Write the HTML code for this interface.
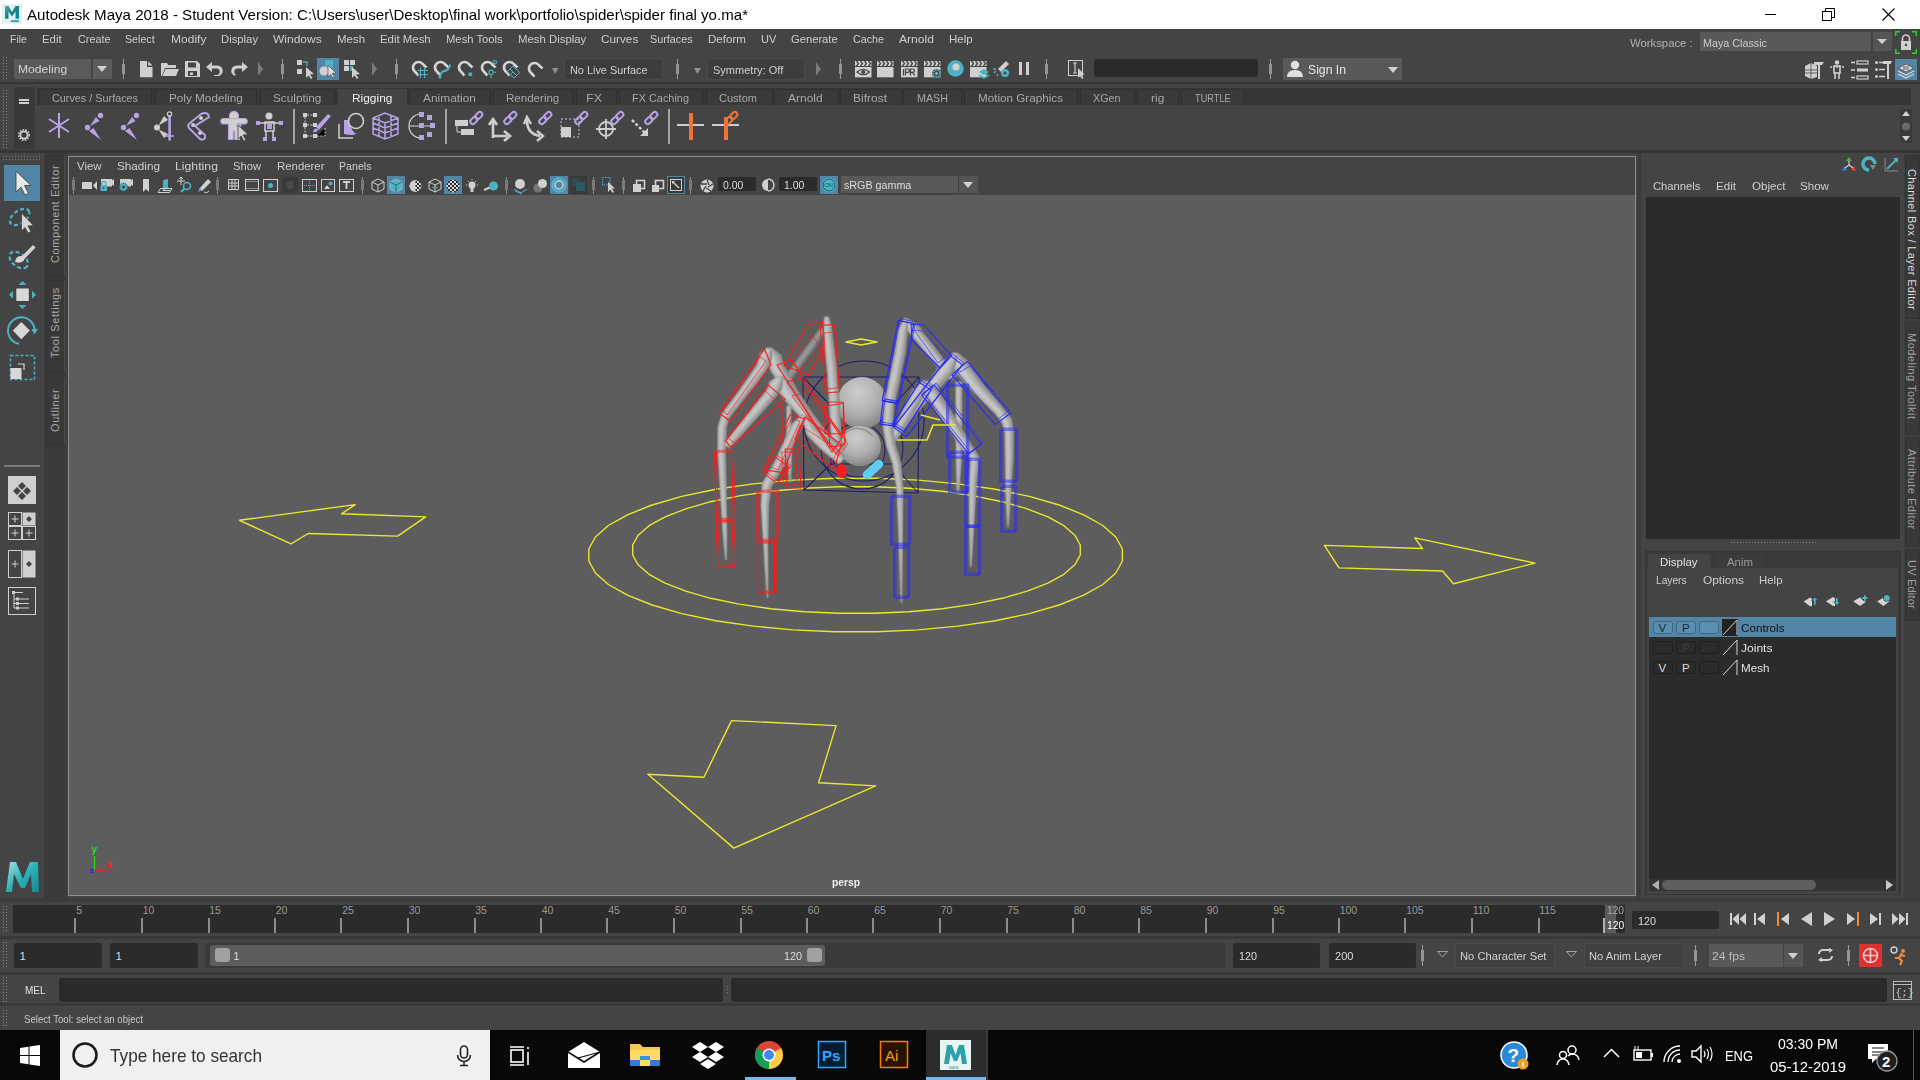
<!DOCTYPE html>
<html><head><meta charset="utf-8"><style>
html,body{margin:0;padding:0;}
body{width:1920px;height:1080px;overflow:hidden;position:relative;background:#444;font-family:"Liberation Sans", sans-serif;}
.a{position:absolute;box-sizing:border-box;}
.t{white-space:nowrap;line-height:normal;transform-origin:0 0;}
svg{position:absolute;overflow:visible;}
</style></head><body>
<div class="a" style="left:0px;top:0px;width:1920px;height:29px;background:#ffffff;"></div>
<svg style="left:2px;top:4px" width="20" height="20"><defs><linearGradient id="tg" x1="0" y1="0" x2="1" y2="1"><stop offset="0" stop-color="#5aa8a8"/><stop offset="0.5" stop-color="#137f86"/><stop offset="1" stop-color="#0e8a8a"/></linearGradient></defs><rect x="0" y="0" width="20" height="19.7" fill="#e2f1f1"/><path d="M3 14.7 V2 H6.5 L10 8 L13.5 2 H17 V14.7 H13.5 V7.5 L10 12.5 L6.5 7.5 V14.7 Z" fill="url(#tg)"/><rect x="9" y="16" width="8" height="2.2" fill="#3fb0a8"/></svg>
<div class="a t" id="t0" style="transform:scaleX(1.0194);left:27px;top:6.61px;font-size:14.8px;color:#000;">Autodesk Maya 2018 - Student Version: C:\Users\user\Desktop\final work\portfolio\spider\spider final yo.ma*</div>
<div class="a" style="left:1765px;top:14px;width:11px;height:1px;background:#000;"></div>
<svg style="left:1822px;top:8px" width="14" height="14"><rect x="0.5" y="3.5" width="9" height="9" fill="none" stroke="#000" stroke-width="1"/><path d="M3.5 3.5 V0.5 H12.5 V9.5 H9.5" fill="none" stroke="#000" stroke-width="1"/></svg>
<svg style="left:1882px;top:8px" width="13" height="13"><path d="M0.5 0.5 L12.5 12.5 M12.5 0.5 L0.5 12.5" stroke="#000" stroke-width="1.1"/></svg>
<div class="a t" id="t1" style="transform:scaleX(0.9501);left:9.75px;top:33.05px;font-size:11px;color:#cdcdcd;">File</div>
<div class="a t" id="t2" style="transform:scaleX(1.0359);left:42.25px;top:33.05px;font-size:11px;color:#cdcdcd;">Edit</div>
<div class="a t" id="t3" style="transform:scaleX(0.9839);left:77.5px;top:33.05px;font-size:11px;color:#cdcdcd;">Create</div>
<div class="a t" id="t4" style="transform:scaleX(0.9680);left:125.4px;top:33.05px;font-size:11px;color:#cdcdcd;">Select</div>
<div class="a t" id="t5" style="transform:scaleX(1.0924);left:170.6px;top:33.05px;font-size:11px;color:#cdcdcd;">Modify</div>
<div class="a t" id="t6" style="transform:scaleX(1.0269);left:221.25px;top:33.05px;font-size:11px;color:#cdcdcd;">Display</div>
<div class="a t" id="t7" style="transform:scaleX(1.0913);left:273px;top:33.05px;font-size:11px;color:#cdcdcd;">Windows</div>
<div class="a t" id="t8" style="transform:scaleX(1.0407);left:337px;top:33.05px;font-size:11px;color:#cdcdcd;">Mesh</div>
<div class="a t" id="t9" style="transform:scaleX(1.0363);left:380px;top:33.05px;font-size:11px;color:#cdcdcd;">Edit Mesh</div>
<div class="a t" id="t10" style="transform:scaleX(1.0228);left:446px;top:33.05px;font-size:11px;color:#cdcdcd;">Mesh Tools</div>
<div class="a t" id="t11" style="transform:scaleX(1.0344);left:517.7px;top:33.05px;font-size:11px;color:#cdcdcd;">Mesh Display</div>
<div class="a t" id="t12" style="transform:scaleX(1.0705);left:601px;top:33.05px;font-size:11px;color:#cdcdcd;">Curves</div>
<div class="a t" id="t13" style="transform:scaleX(0.9834);left:650px;top:33.05px;font-size:11px;color:#cdcdcd;">Surfaces</div>
<div class="a t" id="t14" style="transform:scaleX(1.0537);left:708px;top:33.05px;font-size:11px;color:#cdcdcd;">Deform</div>
<div class="a t" id="t15" style="transform:scaleX(1.0012);left:760.7px;top:33.05px;font-size:11px;color:#cdcdcd;">UV</div>
<div class="a t" id="t16" style="transform:scaleX(1.0180);left:791px;top:33.05px;font-size:11px;color:#cdcdcd;">Generate</div>
<div class="a t" id="t17" style="transform:scaleX(0.9749);left:853px;top:33.05px;font-size:11px;color:#cdcdcd;">Cache</div>
<div class="a t" id="t18" style="transform:scaleX(1.1007);left:899px;top:33.05px;font-size:11px;color:#cdcdcd;">Arnold</div>
<div class="a t" id="t19" style="transform:scaleX(1.0475);left:949px;top:33.05px;font-size:11px;color:#cdcdcd;">Help</div>
<div class="a t" id="t20" style="transform:scaleX(1.0289);left:1630px;top:37.05px;font-size:11px;color:#b4b4b4;">Workspace :</div>
<div class="a" style="left:1700px;top:32px;width:171px;height:19px;background:#595959;"></div>
<div class="a" style="left:1873px;top:32px;width:19px;height:19px;background:#555555;"></div>
<div class="a t" id="t21" style="transform:scaleX(0.9785);left:1703.3px;top:37.25px;font-size:11px;color:#cdcdcd;">Maya Classic</div>
<svg style="left:1876px;top:38px" width="12" height="8"><path d="M1 1 H11 L6 6 Z" fill="#cfcfcf"/></svg>
<svg style="left:1895px;top:31px" width="22" height="23"><path d="M0.75 5 V0.75 H5 M17 0.75 H21.25 V5 M21.25 18 V22.25 H17 M5 22.25 H0.75 V18" fill="none" stroke="#22d822" stroke-width="1.5"/><path d="M7.5 10 V7.5 A3.5 3.5 0 0 1 14.5 7.5 V10" fill="none" stroke="#cfcfcf" stroke-width="1.6"/><rect x="6" y="10" width="10" height="9" fill="#cfcfcf"/><circle cx="11" cy="14" r="1.2" fill="#444"/></svg>
<div class="a" style="left:0px;top:82px;width:1920px;height:2px;background:#363636;"></div>
<div class="a" style="left:2px;top:56px;width:6px;height:24px;background-image:radial-gradient(circle at 1.5px 1.5px,#8a8a8a 0.75px,transparent 0.95px);background-size:3px 3px;"></div>
<div class="a" style="left:14px;top:59px;width:77px;height:20px;background:#5a5a5a;"></div>
<div class="a" style="left:93px;top:59px;width:19px;height:20px;background:#5c5c5c;"></div>
<div class="a t" id="t22" style="transform:scaleX(1.0542);left:17.5px;top:63.39px;font-size:11.5px;color:#d2d2d2;">Modeling</div>
<svg style="left:97px;top:66px" width="10" height="6"><path d="M0 0 H10 L5.0 6 Z" fill="#d0d0d0"/></svg>
<div class="a" style="left:123px;top:59px;width:1px;height:20px;background:#9a9a9a;"></div>
<div class="a" style="left:122px;top:64.0px;width:3px;height:10px;background:#949494;"></div>
<svg style="left:139.5px;top:61px" width="13" height="17"><path d="M0 0 H7 V6 H12.5 V16.3 H0 Z" fill="#cfcfcf"/><path d="M8.2 0.3 L12.5 4.6 H8.2 Z" fill="#cfcfcf"/></svg>
<svg style="left:161px;top:61px" width="18" height="15"><path d="M0 2 H6 L7.5 4 H15 V7 H4 L1 15 H0 Z" fill="#cfcfcf"/><path d="M4.5 8 H18 L15 15 H1.5 Z" fill="#cfcfcf"/></svg>
<svg style="left:185px;top:61px" width="15" height="16"><path d="M0 0 H12 L15 3 V16 H0 Z" fill="#cfcfcf"/><rect x="3" y="1.5" width="8" height="5" fill="#444"/><rect x="3" y="10" width="9" height="5" fill="#444"/><rect x="5" y="11.5" width="3" height="2.5" fill="#cfcfcf"/></svg>
<svg style="left:206px;top:62px" width="18" height="14"><path d="M6 0 L0 5 L6 10 V6.5 H11 A3.3 3.3 0 0 1 11 13 H8 V14 H11.5 A5 5 0 0 0 11.5 3.5 H6 Z" fill="#cfcfcf"/></svg>
<svg style="left:230px;top:62px" width="18" height="14"><path d="M12 0 L18 5 L12 10 V6.5 H7 A3.3 3.3 0 0 0 7 13 H5 V14 H6.5 A5 5 0 0 1 6.5 3.5 H12 Z" fill="#cfcfcf"/></svg>
<svg style="left:258px;top:62px" width="6" height="14"><path d="M0 0 L5 7 L0 14 Z" fill="#7a7a7a"/></svg>
<div class="a" style="left:282px;top:59px;width:1px;height:20px;background:#9a9a9a;"></div>
<div class="a" style="left:281px;top:64.0px;width:3px;height:10px;background:#949494;"></div>
<svg style="left:297px;top:60px" width="18" height="18"><rect x="0" y="0" width="5" height="5" fill="#cfcfcf"/><rect x="0" y="9" width="5" height="5" fill="#cfcfcf"/><path d="M6 2 H10 V6" stroke="#4cb3c4" fill="none" stroke-width="1.3"/><path d="M9 7 L9 18 L11.5 15.5 L14 19 L15.5 18 L13 14.5 L17 14 Z" fill="#cfcfcf"/></svg>
<div class="a" style="left:317px;top:58px;width:22px;height:22px;background:#5285a6;"></div>
<svg style="left:319px;top:60px" width="18" height="18"><rect x="6" y="0" width="8" height="8" fill="#4cb3c4" stroke="#2d5d79" stroke-width="0"/><circle cx="5" cy="11" r="4.5" fill="#cfcfcf"/><path d="M9 5 L9 17 L11.5 14.5 L14 18 L15.5 17 L13 13.5 L17 13 Z" fill="#dcdcdc" stroke="#444" stroke-width="0.6"/></svg>
<svg style="left:344px;top:60px" width="16" height="18"><rect x="0" y="0" width="5" height="5" fill="#cfcfcf"/><rect x="6" y="0" width="5" height="5" fill="#cfcfcf"/><rect x="0" y="6" width="5" height="5" fill="#cfcfcf"/><rect x="6" y="6" width="3" height="5" fill="#4cb3c4"/><path d="M8 7 L8 18 L10.5 15.5 L13 19 L14.5 18 L12 14.5 L16 14 Z" fill="#cfcfcf"/></svg>
<svg style="left:372px;top:62px" width="6" height="14"><path d="M0 0 L5 7 L0 14 Z" fill="#7a7a7a"/></svg>
<div class="a" style="left:396px;top:59px;width:1px;height:20px;background:#9a9a9a;"></div>
<div class="a" style="left:395px;top:64.0px;width:3px;height:10px;background:#949494;"></div>
<svg style="left:411px;top:60px" width="20" height="20"><g transform="rotate(0 8 8)"><path d="M6 13.8 L3.6 11.4 A5.4 5.4 0 0 1 11.4 3.6 L13.8 6" fill="none" stroke="#d4d4d4" stroke-width="2.7"/><path d="M5.0 14.6 H8.2 M6.6 13.0 V16.2" stroke="#d8d8d8" stroke-width="1.1"/><path d="M13.0 6.6 H16.2 M14.6 5.0 V8.2" stroke="#d8d8d8" stroke-width="1.1"/></g><path d="M9.5 7.5 V18 M13.5 7.5 V18 M6.5 10.5 H17 M6.5 14.5 H17" stroke="#4cb3c4" stroke-width="1.2"/></svg>
<svg style="left:433px;top:60px" width="20" height="20"><g transform="rotate(0 8 8)"><path d="M6 13.8 L3.6 11.4 A5.4 5.4 0 0 1 11.4 3.6 L13.8 6" fill="none" stroke="#d4d4d4" stroke-width="2.7"/><path d="M5.0 14.6 H8.2 M6.6 13.0 V16.2" stroke="#d8d8d8" stroke-width="1.1"/><path d="M13.0 6.6 H16.2 M14.6 5.0 V8.2" stroke="#d8d8d8" stroke-width="1.1"/></g><path d="M7 16.5 Q7.5 12 11.5 11 Q16 10 17 4.5" stroke="#4cb3c4" fill="none" stroke-width="2"/><circle cx="7" cy="17" r="1.6" fill="#4cb3c4"/></svg>
<svg style="left:457px;top:60px" width="20" height="20"><g transform="rotate(0 8 8)"><path d="M6 13.8 L3.6 11.4 A5.4 5.4 0 0 1 11.4 3.6 L13.8 6" fill="none" stroke="#d4d4d4" stroke-width="2.7"/><path d="M5.0 14.6 H8.2 M6.6 13.0 V16.2" stroke="#d8d8d8" stroke-width="1.1"/><path d="M13.0 6.6 H16.2 M14.6 5.0 V8.2" stroke="#d8d8d8" stroke-width="1.1"/></g><circle cx="13.3" cy="14.2" r="2" fill="#4cb3c4"/></svg>
<svg style="left:480px;top:60px" width="20" height="20"><g transform="rotate(0 8 8)"><path d="M6 13.8 L3.6 11.4 A5.4 5.4 0 0 1 11.4 3.6 L13.8 6" fill="none" stroke="#d4d4d4" stroke-width="2.7"/><path d="M5.0 14.6 H8.2 M6.6 13.0 V16.2" stroke="#d8d8d8" stroke-width="1.1"/><path d="M13.0 6.6 H16.2 M14.6 5.0 V8.2" stroke="#d8d8d8" stroke-width="1.1"/></g><circle cx="14.8" cy="2.2" r="1.7" fill="none" stroke="#4cb3c4" stroke-width="1.1"/><circle cx="11" cy="12.3" r="2.2" fill="none" stroke="#4cb3c4" stroke-width="1.1"/><path d="M11 15 V18 M14 12.3 H16" stroke="#4cb3c4" stroke-width="1.1"/></svg>
<svg style="left:502px;top:60px" width="20" height="20"><g transform="rotate(0 8 8)"><path d="M6 13.8 L3.6 11.4 A5.4 5.4 0 0 1 11.4 3.6 L13.8 6" fill="none" stroke="#d4d4d4" stroke-width="2.7"/><path d="M5.0 14.6 H8.2 M6.6 13.0 V16.2" stroke="#d8d8d8" stroke-width="1.1"/><path d="M13.0 6.6 H16.2 M14.6 5.0 V8.2" stroke="#d8d8d8" stroke-width="1.1"/></g><path d="M5 12 L11 6 L17.8 12.5 L12 18 Z M8 9 L14.5 15.5 M11 12 L8.5 14.5" fill="none" stroke="#4cb3c4" stroke-width="1"/></svg>
<svg style="left:527px;top:61px" width="20" height="20"><g transform="rotate(0 8 8)"><path d="M6 13.8 L3.6 11.4 A5.4 5.4 0 0 1 11.4 3.6 L13.8 6" fill="none" stroke="#d4d4d4" stroke-width="2.7"/><path d="M5.0 14.6 H8.2 M6.6 13.0 V16.2" stroke="#d8d8d8" stroke-width="1.1"/><path d="M13.0 6.6 H16.2 M14.6 5.0 V8.2" stroke="#d8d8d8" stroke-width="1.1"/></g></svg>
<svg style="left:551.5px;top:67.5px" width="6.5" height="6"><path d="M0 0 H6.5 L3.25 6 Z" fill="#8f8f8f"/></svg>
<div class="a" style="left:564px;top:58px;width:99px;height:22px;background:#3d3d3d;border:1px solid #4a4a4a;border-radius:2px;"></div>
<div class="a t" id="t23" style="transform:scaleX(0.9735);left:570.3px;top:64.06px;font-size:11.2px;color:#d0d0d0;">No Live Surface</div>
<div class="a" style="left:677px;top:59px;width:1px;height:20px;background:#9a9a9a;"></div>
<div class="a" style="left:676px;top:64.0px;width:3px;height:10px;background:#949494;"></div>
<svg style="left:694px;top:68px" width="7" height="6"><path d="M0 0 H7 L3.5 6 Z" fill="#8f8f8f"/></svg>
<div class="a" style="left:707px;top:58px;width:98px;height:22px;background:#3d3d3d;border:1px solid #4a4a4a;border-radius:2px;"></div>
<div class="a t" id="t24" style="transform:scaleX(0.9848);left:712.5px;top:63.86px;font-size:11.2px;color:#d0d0d0;">Symmetry: Off</div>
<svg style="left:816px;top:62px" width="6" height="14"><path d="M0 0 L5 7 L0 14 Z" fill="#7a7a7a"/></svg>
<div class="a" style="left:840px;top:59px;width:1px;height:20px;background:#9a9a9a;"></div>
<div class="a" style="left:839px;top:64.0px;width:3px;height:10px;background:#949494;"></div>
<svg style="left:855px;top:60px" width="18" height="18"><rect x="0" y="1" width="16.5" height="5" fill="#cfcfcf"/><path d="M1.5 1 L3.5 3.5 L1.5 6 M5.5 1 L7.5 3.5 L5.5 6 M9.5 1 L11.5 3.5 L9.5 6 M13.5 1 L15.5 3.5 L13.5 6" stroke="#444" stroke-width="1.3" fill="none"/><rect x="0" y="7" width="16.5" height="10.3" fill="#cfcfcf"/><path d="M2 12 Q8.2 6.5 14.5 12 Q8.2 17.5 2 12 Z" fill="none" stroke="#444" stroke-width="1.2"/><circle cx="8.2" cy="12" r="2" fill="#444"/></svg>
<svg style="left:877px;top:60px" width="18" height="18"><rect x="0" y="1" width="16.5" height="5" fill="#cfcfcf"/><path d="M1.5 1 L3.5 3.5 L1.5 6 M5.5 1 L7.5 3.5 L5.5 6 M9.5 1 L11.5 3.5 L9.5 6 M13.5 1 L15.5 3.5 L13.5 6" stroke="#444" stroke-width="1.3" fill="none"/><rect x="0" y="7" width="16.5" height="10.3" fill="#cfcfcf"/></svg>
<svg style="left:901px;top:60px" width="18" height="18"><rect x="0" y="1" width="16.5" height="5" fill="#cfcfcf"/><path d="M1.5 1 L3.5 3.5 L1.5 6 M5.5 1 L7.5 3.5 L5.5 6 M9.5 1 L11.5 3.5 L9.5 6 M13.5 1 L15.5 3.5 L13.5 6" stroke="#444" stroke-width="1.3" fill="none"/><rect x="0" y="7" width="16.5" height="10.3" fill="#cfcfcf"/><path d="M2.5 9 V15.5 M4.5 15.5 V9 H6.8 A1.7 1.7 0 0 1 6.8 12.4 H4.5 M9.5 15.5 V9 H11.8 A1.7 1.7 0 0 1 11.8 12.4 H9.5 M11.5 12.4 L13.8 15.5" stroke="#444" stroke-width="1.2" fill="none"/></svg>
<svg style="left:924px;top:60px" width="18" height="18"><rect x="0" y="1" width="16.5" height="5" fill="#cfcfcf"/><path d="M1.5 1 L3.5 3.5 L1.5 6 M5.5 1 L7.5 3.5 L5.5 6 M9.5 1 L11.5 3.5 L9.5 6 M13.5 1 L15.5 3.5 L13.5 6" stroke="#444" stroke-width="1.3" fill="none"/><rect x="0" y="7" width="16.5" height="10.3" fill="#cfcfcf"/><circle cx="12.5" cy="13.5" r="4.5" fill="#444"/><circle cx="12.5" cy="13.5" r="3.6" fill="none" stroke="#4cb3c4" stroke-width="2" stroke-dasharray="1.6 0.9"/><circle cx="12.5" cy="13.5" r="1.2" fill="#cfcfcf"/></svg>
<svg style="left:947px;top:60px" width="17" height="17"><circle cx="8.5" cy="8.5" r="8.3" fill="#4cb3c4"/><circle cx="9" cy="7" r="3.6" fill="#d0d0d0"/></svg>
<svg style="left:970px;top:60px" width="18" height="18"><rect x="0" y="1" width="16.5" height="5" fill="#cfcfcf"/><path d="M1.5 1 L3.5 3.5 L1.5 6 M5.5 1 L7.5 3.5 L5.5 6 M9.5 1 L11.5 3.5 L9.5 6 M13.5 1 L15.5 3.5 L13.5 6" stroke="#444" stroke-width="1.3" fill="none"/><rect x="0" y="7" width="16.5" height="10.3" fill="#cfcfcf"/><path d="M9 12 L14 9 L19 12 L14 15 Z" fill="#4cb3c4"/><path d="M9 15 L14 18 L19 15" stroke="#4cb3c4" fill="none" stroke-width="1.5"/></svg>
<svg style="left:993px;top:60px" width="18" height="18"><path d="M5 9 L13 1 L16 4 L8 12 Z" fill="#cfcfcf"/><circle cx="12" cy="13" r="4" fill="#4cb3c4"/><circle cx="12" cy="13" r="1.5" fill="#444"/><path d="M0 9 H3 M1 13 L3 11 M4 16 L5 14" stroke="#4cb3c4" stroke-width="1.3"/></svg>
<div class="a" style="left:1019px;top:62px;width:3px;height:13px;background:#cfcfcf;"></div>
<div class="a" style="left:1026px;top:62px;width:3px;height:13px;background:#cfcfcf;"></div>
<div class="a" style="left:1046px;top:59px;width:1px;height:20px;background:#9a9a9a;"></div>
<div class="a" style="left:1045px;top:64.0px;width:3px;height:10px;background:#949494;"></div>
<svg style="left:1068px;top:60px" width="18" height="19"><rect x="0.5" y="0.5" width="14" height="15" fill="none" stroke="#cfcfcf"/><path d="M5 3 H9 M7 3 V13 M5 13 H9" stroke="#cfcfcf" stroke-width="1.2"/><path d="M10 8 L10 18 L12 16 L14 19 L15.5 18 L13.5 15 L16.5 14.5 Z" fill="#cfcfcf"/></svg>
<div class="a" style="left:1094px;top:59px;width:164px;height:18px;background:#2b2b2b;border-radius:3px;"></div>
<div class="a" style="left:1270px;top:59px;width:1px;height:20px;background:#9a9a9a;"></div>
<div class="a" style="left:1269px;top:64.0px;width:3px;height:10px;background:#949494;"></div>
<div class="a" style="left:1283px;top:58px;width:119px;height:22px;background:#595959;"></div>
<svg style="left:1287px;top:60px" width="16" height="18"><circle cx="8" cy="5" r="4.2" fill="#e0e0e0"/><path d="M0 17 Q0 10 8 10 Q16 10 16 17 Z" fill="#e0e0e0"/></svg>
<div class="a t" id="t25" style="transform:scaleX(0.9763);left:1307.7px;top:63.39px;font-size:12.5px;color:#e6e6e6;">Sign In</div>
<svg style="left:1388px;top:67px" width="10" height="6"><path d="M0 0 H10 L5.0 6 Z" fill="#d0d0d0"/></svg>
<svg style="left:1805px;top:60px" width="19" height="19"><path d="M0 6 L6 3 L12 6 V17 L6 19 L0 16 Z" fill="#cfcfcf"/><path d="M6 3 L6 19 M0 10 L12 10 M0 13 L12 13" stroke="#444" stroke-width="0.8"/><path d="M9 2 H19 L17 5 H15 V19 H13 V5 H9 Z" fill="#cfcfcf"/></svg>
<svg style="left:1829px;top:60px" width="16" height="19"><circle cx="8" cy="2.5" r="2.2" fill="#cfcfcf"/><path d="M1 7 H15" stroke="#cfcfcf" stroke-width="1.5" stroke-dasharray="2 1"/><rect x="5" y="6" width="6" height="7" fill="none" stroke="#cfcfcf" stroke-width="1.6"/><path d="M6 13 V19 M10 13 V19" stroke="#cfcfcf" stroke-width="1.6"/></svg>
<svg style="left:1851px;top:61px" width="18" height="18"><path d="M0 1.5 H4 M0 9 H4 M0 16.5 H4" stroke="#cfcfcf" stroke-width="1.5"/><rect x="6" y="0" width="11" height="3" fill="none" stroke="#cfcfcf" stroke-width="1.2"/><rect x="6" y="7.5" width="11" height="3" fill="#cfcfcf"/><rect x="6" y="15" width="11" height="3" fill="none" stroke="#cfcfcf" stroke-width="1.2"/></svg>
<svg style="left:1875px;top:61px" width="17" height="18"><circle cx="1.5" cy="1.5" r="1.5" fill="#cfcfcf"/><circle cx="1.5" cy="8.5" r="1.5" fill="#cfcfcf"/><circle cx="1.5" cy="15.5" r="1.5" fill="#cfcfcf"/><path d="M4 1.5 H8 M4 8.5 H10 M4 15.5 H10" stroke="#cfcfcf" stroke-width="1.3"/><path d="M8 0 H17 L15.5 3 H14 V18 H12 V3 H8 Z" fill="#cfcfcf"/></svg>
<div class="a" style="left:1895px;top:59px;width:22px;height:21px;background:#5285a6;"></div>
<svg style="left:1897px;top:61px" width="18" height="17"><path d="M9 11 L17 7 L9 3 L1 7 Z" fill="#d8d8d8" stroke="#444" stroke-width="0.8"/><path d="M1 10 L9 14 L17 10 M1 13 L9 17 L17 13" fill="none" stroke="#d8d8d8" stroke-width="1.3"/><path d="M6 6 H12 M6 8 H12" stroke="#444" stroke-width="0.8"/></svg>
<div class="a" style="left:2px;top:89px;width:6px;height:59px;background-image:radial-gradient(circle at 1.5px 1.5px,#8a8a8a 0.75px,transparent 0.95px);background-size:3px 3px;"></div>
<div class="a" style="left:14px;top:87px;width:21px;height:62px;background:#393939;"></div>
<div class="a" style="left:19px;top:99px;width:10px;height:2px;background:#cfcfcf;"></div>
<div class="a" style="left:19px;top:102px;width:10px;height:2px;background:#cfcfcf;"></div>
<svg style="left:18px;top:129px" width="12" height="12"><circle cx="6" cy="6" r="3.6" fill="none" stroke="#cfcfcf" stroke-width="1.8"/><circle cx="6" cy="6" r="5.2" fill="none" stroke="#cfcfcf" stroke-width="1.6" stroke-dasharray="1.6 1.2"/></svg>
<div class="a" style="left:37px;top:88px;width:1874px;height:17px;background:#363636;"></div>
<div class="a" style="left:39.3px;top:89px;width:112.39999999999999px;height:16px;background:#3a3a3a;border:1px solid #303030;border-bottom:none;border-radius:2px 2px 0 0;"></div>
<div class="a t" id="t26" style="transform:scaleX(0.9837);left:52.3px;top:92.34px;font-size:11px;color:#a8a8a8;">Curves / Surfaces</div>
<div class="a" style="left:155.3px;top:89px;width:101.39999999999998px;height:16px;background:#3a3a3a;border:1px solid #303030;border-bottom:none;border-radius:2px 2px 0 0;"></div>
<div class="a t" id="t27" style="transform:scaleX(1.0667);left:169px;top:92.34px;font-size:11px;color:#a8a8a8;">Poly Modeling</div>
<div class="a" style="left:260px;top:89px;width:75px;height:16px;background:#3a3a3a;border:1px solid #303030;border-bottom:none;border-radius:2px 2px 0 0;"></div>
<div class="a t" id="t28" style="transform:scaleX(1.0692);left:273.3px;top:92.34px;font-size:11px;color:#a8a8a8;">Sculpting</div>
<div class="a" style="left:338.3px;top:89px;width:68.39999999999998px;height:16px;background:#444444;"></div>
<div class="a t" id="t29" style="transform:scaleX(1.0827);left:352.3px;top:92.34px;font-size:11px;color:#f0f0f0;">Rigging</div>
<div class="a" style="left:409.3px;top:89px;width:80.69999999999999px;height:16px;background:#3a3a3a;border:1px solid #303030;border-bottom:none;border-radius:2px 2px 0 0;"></div>
<div class="a t" id="t30" style="transform:scaleX(1.0834);left:422.7px;top:92.34px;font-size:11px;color:#a8a8a8;">Animation</div>
<div class="a" style="left:492.7px;top:89px;width:80.59999999999997px;height:16px;background:#3a3a3a;border:1px solid #303030;border-bottom:none;border-radius:2px 2px 0 0;"></div>
<div class="a t" id="t31" style="transform:scaleX(1.0499);left:506px;top:92.34px;font-size:11px;color:#a8a8a8;">Rendering</div>
<div class="a" style="left:576px;top:89px;width:40.700000000000045px;height:16px;background:#3a3a3a;border:1px solid #303030;border-bottom:none;border-radius:2px 2px 0 0;"></div>
<div class="a t" id="t32" style="transform:scaleX(1.1378);left:585.7px;top:92.34px;font-size:11px;color:#a8a8a8;">FX</div>
<div class="a" style="left:619.3px;top:89px;width:83.70000000000005px;height:16px;background:#3a3a3a;border:1px solid #303030;border-bottom:none;border-radius:2px 2px 0 0;"></div>
<div class="a t" id="t33" style="transform:scaleX(0.9916);left:632px;top:92.34px;font-size:11px;color:#a8a8a8;">FX Caching</div>
<div class="a" style="left:705.7px;top:89px;width:67.59999999999991px;height:16px;background:#3a3a3a;border:1px solid #303030;border-bottom:none;border-radius:2px 2px 0 0;"></div>
<div class="a t" id="t34" style="transform:scaleX(1.0025);left:719.3px;top:92.34px;font-size:11px;color:#a8a8a8;">Custom</div>
<div class="a" style="left:774px;top:89px;width:65px;height:16px;background:#3a3a3a;border:1px solid #303030;border-bottom:none;border-radius:2px 2px 0 0;"></div>
<div class="a t" id="t35" style="transform:scaleX(1.0882);left:787.7px;top:92.34px;font-size:11px;color:#a8a8a8;">Arnold</div>
<div class="a" style="left:840px;top:89px;width:61.700000000000045px;height:16px;background:#3a3a3a;border:1px solid #303030;border-bottom:none;border-radius:2px 2px 0 0;"></div>
<div class="a t" id="t36" style="transform:scaleX(1.0902);left:852.7px;top:92.34px;font-size:11px;color:#a8a8a8;">Bifrost</div>
<div class="a" style="left:903.3px;top:89px;width:58.40000000000009px;height:16px;background:#3a3a3a;border:1px solid #303030;border-bottom:none;border-radius:2px 2px 0 0;"></div>
<div class="a t" id="t37" style="transform:scaleX(0.9754);left:916.7px;top:92.34px;font-size:11px;color:#a8a8a8;">MASH</div>
<div class="a" style="left:964px;top:89px;width:114.29999999999995px;height:16px;background:#3a3a3a;border:1px solid #303030;border-bottom:none;border-radius:2px 2px 0 0;"></div>
<div class="a t" id="t38" style="transform:scaleX(1.0613);left:978.3px;top:92.34px;font-size:11px;color:#a8a8a8;">Motion Graphics</div>
<div class="a" style="left:1080px;top:89px;width:55px;height:16px;background:#3a3a3a;border:1px solid #303030;border-bottom:none;border-radius:2px 2px 0 0;"></div>
<div class="a t" id="t39" style="transform:scaleX(0.9737);left:1093.3px;top:92.34px;font-size:11px;color:#a8a8a8;">XGen</div>
<div class="a" style="left:1137.3px;top:89px;width:41.700000000000045px;height:16px;background:#3a3a3a;border:1px solid #303030;border-bottom:none;border-radius:2px 2px 0 0;"></div>
<div class="a t" id="t40" style="transform:scaleX(1.0871);left:1151px;top:92.34px;font-size:11px;color:#a8a8a8;">rig</div>
<div class="a" style="left:1180.7px;top:89px;width:63.299999999999955px;height:16px;background:#3a3a3a;border:1px solid #303030;border-bottom:none;border-radius:2px 2px 0 0;"></div>
<div class="a t" id="t41" style="transform:scaleX(0.8382);left:1195px;top:92.34px;font-size:11px;color:#a8a8a8;">TURTLE</div>
<div class="a" style="left:1900px;top:109px;width:12px;height:34px;background:#3a3a3a;"></div>
<svg style="left:1901px;top:110px" width="10" height="32"><path d="M1 6 L5 1 L9 6 Z" fill="#d0d0d0"/><circle cx="5" cy="16.5" r="4" fill="#6a6a6a"/><path d="M1 26 L9 26 L5 31 Z" fill="#d0d0d0"/></svg>
<div class="a" style="left:293px;top:109px;width:2px;height:35px;background:#a5a5a5;"></div>
<div class="a" style="left:445px;top:109px;width:2px;height:35px;background:#a5a5a5;"></div>
<div class="a" style="left:668px;top:109px;width:2px;height:35px;background:#a5a5a5;"></div>
<svg style="left:49px;top:111px" width="21" height="30"><path d="M10 2 V27 M0 8 L20 21 M0 21 L20 8" stroke="#b7a2e6" stroke-width="2"/></svg>
<svg style="left:84px;top:112px" width="22" height="30"><circle cx="16.5" cy="3.5" r="2.7" fill="#b7a2e6"/><path d="M6 14 L12 5 L15.5 9 Z" fill="#b7a2e6"/><circle cx="3.5" cy="15.5" r="2.7" fill="#b7a2e6"/><path d="M5 19 L9.5 16 L17 28 Z" fill="#b7a2e6"/></svg>
<svg style="left:120px;top:112px" width="22" height="30"><circle cx="16.5" cy="3.5" r="2.7" fill="#b7a2e6"/><path d="M6 14 L12 5 L15.5 9 Z" fill="#b7a2e6"/><circle cx="3.5" cy="15.5" r="2.7" fill="#b7a2e6"/><path d="M5 19 L9.5 16 L17 28 Z" fill="#b7a2e6"/></svg>
<svg style="left:154px;top:111px" width="22" height="31"><circle cx="3" cy="16.5" r="3" fill="#cfcfcf"/><path d="M4.5 14.5 L10 5 L14 9 Z" fill="#cfcfcf"/><path d="M4.5 18.5 L14 23 L10 27 Z" fill="#cfcfcf"/><path d="M15.6 4 V29.5" stroke="#b7a2e6" stroke-width="2.6"/><circle cx="15.6" cy="3" r="2.2" fill="none" stroke="#cfcfcf" stroke-width="1.2"/><path d="M11 25 H20" stroke="#b7a2e6" stroke-width="1.6"/></svg>
<svg style="left:187px;top:111px" width="24" height="30"><path d="M14 3 Q21 0 22 6 L8 15 L18 24 Q19 30 13 28 L2 17 Q0 14 3 12 Z" fill="none" stroke="#b7a2e6" stroke-width="2"/><circle cx="14" cy="7" r="2" fill="#cfcfcf"/><circle cx="6" cy="14" r="2" fill="#cfcfcf"/><circle cx="13" cy="22" r="2" fill="#cfcfcf"/></svg>
<svg style="left:220px;top:111px" width="30" height="32"><circle cx="14" cy="5" r="4.6" fill="#cfcfcf" stroke="#b7a2e6" stroke-width="1.1"/><path d="M3 7.5 H25 A2.8 2.8 0 0 1 25 13 H19.5 V28.5 H14.8 V20 H13.2 V28.5 H8.5 V13 H3 A2.8 2.8 0 0 1 3 7.5 Z" fill="#cfcfcf" stroke="#b7a2e6" stroke-width="1.1"/><circle cx="19" cy="14" r="2.6" fill="#b7a2e6"/><path d="M18 14 L18 28 L21 25 L24 30 L26 29 L23 24 L28 23.5 Z" fill="#cfcfcf" stroke="#444" stroke-width="0.8"/></svg>
<svg style="left:256px;top:112px" width="28" height="30"><circle cx="13" cy="4" r="3.5" fill="#cfcfcf"/><rect x="0" y="9" width="4" height="4" fill="#b7a2e6"/><rect x="23" y="9" width="4" height="4" fill="#b7a2e6"/><path d="M4 11 H23" stroke="#cfcfcf" stroke-width="1.5"/><rect x="9" y="10" width="9" height="9" fill="none" stroke="#cfcfcf" stroke-width="1.5"/><rect x="11" y="12" width="5" height="5" fill="#b7a2e6"/><path d="M10 19 V27 M17 19 V27" stroke="#cfcfcf" stroke-width="1.5"/><rect x="7" y="25" width="4" height="4" fill="#b7a2e6"/><rect x="16" y="25" width="4" height="4" fill="#b7a2e6"/></svg>
<svg style="left:303px;top:112px" width="28" height="28"><g fill="#cfcfcf"><rect x="0" y="1" width="4" height="4"/><rect x="10" y="1" width="4" height="4"/><rect x="0" y="11" width="4" height="4"/><rect x="0" y="22" width="4" height="4"/><rect x="10" y="22" width="4" height="4"/><rect x="10" y="11" width="4" height="4"/></g><path d="M4 3 H10 M2 5 V11 M2 15 V22 M4 24 H10 M14 24 H22 V16 M4 13 H10" stroke="#cfcfcf" stroke-dasharray="2 1.5"/><path d="M13 15 L25 2 L28 4 L16 18 Z" fill="#b7a2e6"/><path d="M10 20 Q11 15 15 17 Q14 21 10 20Z" fill="#b7a2e6"/></svg>
<svg style="left:338px;top:112px" width="28" height="28"><path d="M1 12 V26 H15" fill="none" stroke="#cfcfcf" stroke-width="1.5"/><path d="M6 8 H16 A8 8 0 0 0 22 22 H18 Q14 24 6 22 Z" fill="#b7a2e6"/><circle cx="18" cy="9" r="7.5" fill="#444" stroke="#cfcfcf" stroke-width="1.6"/></svg>
<svg style="left:371px;top:112px" width="28" height="28"><path d="M2 6 L14 1 L27 6 V22 L14 27 L2 22 Z M2 6 L14 11 L27 6 M14 11 V27 M2 11 L14 16 L27 11 M2 16 L14 21 L27 16 M8 3.5 V25 M20 3.5 V25" fill="none" stroke="#b7a2e6" stroke-width="1.5"/></svg>
<svg style="left:408px;top:112px" width="28" height="28"><path d="M13 2 A12 12 0 0 0 13 26" fill="none" stroke="#cfcfcf" stroke-width="1.2"/><path d="M1 14 H26" stroke="#cfcfcf" stroke-width="1"/><g fill="#b7a2e6"><rect x="11" y="0" width="5" height="5"/><rect x="19" y="3" width="5" height="5"/><rect x="22" y="11" width="5" height="5"/><rect x="19" y="20" width="5" height="5"/><rect x="11" y="23" width="5" height="5"/><rect x="11" y="11" width="5" height="5"/></g></svg>
<svg style="left:455px;top:112px" width="30" height="28"><rect x="0" y="8" width="13" height="6" fill="#cfcfcf"/><rect x="6" y="17" width="13" height="6" fill="#cfcfcf"/><path d="M2 14 V20 H6" stroke="#cfcfcf" fill="none"/><path d="M0 0" /><g transform="translate(16 0) rotate(-45 6 6)"><rect x="-2" y="3" width="8" height="5" rx="2.5" fill="none" stroke="#b7a2e6" stroke-width="2"/><rect x="5" y="3" width="8" height="5" rx="2.5" fill="none" stroke="#b7a2e6" stroke-width="2"/></g></svg>
<svg style="left:489px;top:112px" width="30" height="30"><path d="M4 26 V9 M0 13 L4 7 L8 13 M4 24 H18 M15 19 L21 24 L15 29" fill="none" stroke="#cfcfcf" stroke-width="2.6"/><path d="M0 0" /><g transform="translate(16 0) rotate(-45 6 6)"><rect x="-2" y="3" width="8" height="5" rx="2.5" fill="none" stroke="#b7a2e6" stroke-width="2"/><rect x="5" y="3" width="8" height="5" rx="2.5" fill="none" stroke="#b7a2e6" stroke-width="2"/></g></svg>
<svg style="left:524px;top:112px" width="30" height="30"><path d="M3 8 Q3 22 16 24" fill="none" stroke="#cfcfcf" stroke-width="2.6"/><path d="M0 12 L3 5 L7 12 M13 19 L19 24 L13 29" fill="none" stroke="#cfcfcf" stroke-width="2.4"/><path d="M0 0" /><g transform="translate(16 0) rotate(-45 6 6)"><rect x="-2" y="3" width="8" height="5" rx="2.5" fill="none" stroke="#b7a2e6" stroke-width="2"/><rect x="5" y="3" width="8" height="5" rx="2.5" fill="none" stroke="#b7a2e6" stroke-width="2"/></g></svg>
<svg style="left:560px;top:112px" width="30" height="28"><rect x="1" y="7" width="18" height="18" fill="none" stroke="#cfcfcf" stroke-dasharray="2 2"/><rect x="1" y="15" width="10" height="10" fill="#cfcfcf"/><path d="M0 0" /><g transform="translate(16 0) rotate(-45 6 6)"><rect x="-2" y="3" width="8" height="5" rx="2.5" fill="none" stroke="#b7a2e6" stroke-width="2"/><rect x="5" y="3" width="8" height="5" rx="2.5" fill="none" stroke="#b7a2e6" stroke-width="2"/></g></svg>
<svg style="left:596px;top:112px" width="30" height="28"><circle cx="10" cy="17" r="7" fill="none" stroke="#cfcfcf" stroke-width="1.8"/><path d="M10 7 V27 M0 17 H20" stroke="#cfcfcf" stroke-width="1.8"/><path d="M0 0" /><g transform="translate(16 0) rotate(-45 6 6)"><rect x="-2" y="3" width="8" height="5" rx="2.5" fill="none" stroke="#b7a2e6" stroke-width="2"/><rect x="5" y="3" width="8" height="5" rx="2.5" fill="none" stroke="#b7a2e6" stroke-width="2"/></g></svg>
<svg style="left:630px;top:112px" width="30" height="28"><path d="M2 8 L16 22" stroke="#cfcfcf" stroke-width="2.5" stroke-dasharray="3 2"/><path d="M18 16 V24 H10 Z" fill="#cfcfcf"/><path d="M0 0" /><g transform="translate(16 0) rotate(-45 6 6)"><rect x="-2" y="3" width="8" height="5" rx="2.5" fill="none" stroke="#b7a2e6" stroke-width="2"/><rect x="5" y="3" width="8" height="5" rx="2.5" fill="none" stroke="#b7a2e6" stroke-width="2"/></g></svg>
<svg style="left:677px;top:112px" width="28" height="28"><path d="M0 13 H27" stroke="#cfcfcf" stroke-width="2"/><rect x="12" y="1" width="4" height="27" fill="#f0743a"/></svg>
<svg style="left:712px;top:112px" width="30" height="28"><path d="M0 13 H27" stroke="#cfcfcf" stroke-width="2"/><rect x="12" y="5" width="4" height="23" fill="#f0743a"/><g transform="translate(14 0) rotate(-45 6 6)"><rect x="-2" y="3" width="8" height="5" rx="2.5" fill="none" stroke="#f0743a" stroke-width="2"/><rect x="5" y="3" width="8" height="5" rx="2.5" fill="none" stroke="#f0743a" stroke-width="2"/></g></svg>
<div class="a" style="left:0px;top:150px;width:1920px;height:3px;background:#363636;"></div>
<div class="a" style="left:0px;top:153px;width:44px;height:745px;background:#444444;"></div>
<div class="a" style="left:44px;top:153px;width:2px;height:745px;background:#3b3b3b;"></div>
<div class="a" style="left:46px;top:153px;width:19px;height:745px;background:#3a3a3a;"></div>
<div class="a" style="left:65px;top:153px;width:3px;height:745px;background:#3e3e3e;"></div>
<div class="a" style="left:2px;top:155px;width:40px;height:6px;background-image:radial-gradient(circle,#7a7a7a 0.7px,transparent 0.9px);background-size:3px 3px;"></div>
<div class="a" style="left:4px;top:165px;width:36px;height:36px;background:#5285a6;"></div>
<svg style="left:14px;top:170px" width="18" height="26"><path d="M2 1 L2 22 L7 17 L11 25 L14.5 23.5 L10.5 15.5 L17 15.5 Z" fill="#e8e8e8" stroke="#3a3a3a" stroke-width="0.8"/></svg>
<svg style="left:8px;top:205px" width="30" height="30"><ellipse cx="11.7" cy="12" rx="11" ry="6.3" transform="rotate(-35 11.7 12)" fill="none" stroke="#4cb3c4" stroke-width="2.2" stroke-dasharray="4 2.5"/><path d="M13.5 8 L13.5 26 L17 22.5 L20 28 L23 26.5 L20 21 L25.5 20.5 Z" fill="#d4d4d4" stroke="#3a3a3a" stroke-width="0.7"/></svg>
<svg style="left:7px;top:242px" width="30" height="32"><ellipse cx="11.7" cy="18" rx="10.5" ry="6.5" transform="rotate(38 11.7 18)" fill="none" stroke="#4cb3c4" stroke-width="2.2" stroke-dasharray="4 2.5"/><path d="M14 15 L26 3 L28.5 5.5 L17 17.5 Z" fill="#d4d4d4"/><path d="M8 20 Q9 13 15 14 Q18 16 16.5 19 Q13 22 8 20 Z" fill="#d4d4d4"/></svg>
<svg style="left:8px;top:280px" width="30" height="30"><rect x="8.3" y="8.5" width="12.5" height="12.5" fill="#d8d8d8"/><path d="M14.5 1 L18.5 5 H10.5 Z M14.5 29 L18.5 25 H10.5 Z M1 14.7 L5 10.7 V18.7 Z M28 14.7 L24 10.7 V18.7 Z" fill="#4cb3c4"/></svg>
<svg style="left:7px;top:316px" width="32" height="32"><path d="M12 27.7 A13.3 13.3 0 1 1 27.6 14.6" fill="none" stroke="#4cb3c4" stroke-width="2"/><path d="M24.3 13 L30.8 13 L27.5 18.5 Z" fill="#4cb3c4"/><path d="M14.3 6 L22.8 14.6 L14.3 23.2 L5.8 14.6 Z" fill="#d8d8d8"/></svg>
<svg style="left:9px;top:354px" width="28" height="28"><rect x="1.5" y="1.5" width="24" height="24" fill="none" stroke="#4cb3c4" stroke-width="1.5" stroke-dasharray="3 2"/><rect x="1.5" y="14" width="11" height="11" fill="#d8d8d8"/><path d="M9 10 H15 V16" fill="none" stroke="#d8d8d8" stroke-width="1.2"/></svg>
<div class="a" style="left:46px;top:155px;width:19px;height:122px;background:#393939;border:1px solid #333;border-right:1px solid #4a4a4a;"></div>
<div class="a t" style="left:49px;top:262.7px;width:94.39999999999998px;font-size:11px;color:#aaaaaa;transform:rotate(-90deg);transform-origin:0 0;line-height:12px;letter-spacing:0.6px;">Component Editor</div>
<div class="a" style="left:46px;top:280px;width:19px;height:93px;background:#393939;border:1px solid #333;border-right:1px solid #4a4a4a;"></div>
<div class="a t" style="left:49px;top:358.3px;width:65.0px;font-size:11px;color:#aaaaaa;transform:rotate(-90deg);transform-origin:0 0;line-height:12px;letter-spacing:0.6px;">Tool Settings</div>
<div class="a" style="left:46px;top:377px;width:19px;height:68px;background:#393939;border:1px solid #333;border-right:1px solid #4a4a4a;"></div>
<div class="a t" style="left:49px;top:432px;width:44px;font-size:11px;color:#aaaaaa;transform:rotate(-90deg);transform-origin:0 0;line-height:12px;letter-spacing:0.6px;">Outliner</div>
<div class="a" style="left:4px;top:465px;width:36px;height:2px;background:#7a7a7a;"></div>
<svg style="left:8px;top:476px" width="29" height="29"><rect x="0.5" y="0.5" width="27" height="27" fill="#d0d0d0" stroke="#d0d0d0"/><rect x="3" y="3" width="22" height="22" fill="#444"/><rect x="3" y="3" width="22" height="22" fill="#cfcfcf"/><path d="M14 6 L18 10 L14 14 L10 10 Z M9 11 L13 15 L9 19 L5 15 Z M19 11 L23 15 L19 19 L15 15 Z M14 16 L18 20 L14 24 L10 20 Z" fill="#444"/></svg>
<svg style="left:8px;top:512px" width="29" height="29"><rect x="0.5" y="0.5" width="13" height="13" fill="none" stroke="#cfcfcf"/><rect x="14.5" y="0.5" width="13" height="13" fill="#cfcfcf"/><rect x="0.5" y="14.5" width="13" height="13" fill="none" stroke="#cfcfcf"/><rect x="14.5" y="14.5" width="13" height="13" fill="none" stroke="#cfcfcf"/><path d="M7 3.5 V10.5 M3.5 7 H10.5 M7 17.5 V24.5 M3.5 21 H10.5 M21 17.5 V24.5 M17.5 21 H24.5" stroke="#cfcfcf"/><path d="M21 4 L24 7 L21 10 L18 7 Z" fill="#444"/></svg>
<svg style="left:8px;top:550px" width="29" height="29"><rect x="0.5" y="0.5" width="13" height="27" fill="none" stroke="#cfcfcf"/><rect x="14.5" y="0.5" width="13" height="27" fill="#cfcfcf"/><path d="M7 10.5 V17.5 M3.5 14 H10.5" stroke="#cfcfcf"/><path d="M21 11 L24 14 L21 17 L18 14 Z" fill="#444"/></svg>
<svg style="left:8px;top:587px" width="29" height="29"><rect x="0.5" y="0.5" width="27" height="27" fill="none" stroke="#cfcfcf"/><rect x="4" y="4" width="3" height="3" fill="#cfcfcf"/><path d="M7 5.5 H15 M6 7 V21 M6 12 H8 M6 16.5 H8 M6 21 H8 M11 12 H21 M11 16.5 H21 M11 21 H21" stroke="#cfcfcf"/><rect x="8" y="10.5" width="3" height="3" fill="#cfcfcf"/><rect x="8" y="15" width="3" height="3" fill="#cfcfcf"/><rect x="8" y="19.5" width="3" height="3" fill="#cfcfcf"/></svg>
<svg style="left:5px;top:861px" width="35" height="32"><defs><linearGradient id="mg" x1="0" y1="0" x2="1" y2="1"><stop offset="0" stop-color="#9fe0e0"/><stop offset="0.5" stop-color="#2bb1b8"/><stop offset="1" stop-color="#148a92"/></linearGradient></defs><path d="M1 31 L5 1 L11 1 L18 18 L25 1 L33 1 L34 31 L27 31 L26 13 L20 27 L16 27 L9 13 L7 31 Z" fill="url(#mg)"/></svg>
<div class="a" style="left:68px;top:156px;width:1568px;height:740px;background:#444444;border:1px solid #8e8e8e;"></div>
<div class="a" style="left:69px;top:195px;width:1566px;height:700px;background:#5d5d5d;"></div>
<div class="a t" id="t42" style="transform:scaleX(1.0357);left:77px;top:159.74px;font-size:11px;color:#cdcdcd;">View</div>
<div class="a t" id="t43" style="transform:scaleX(1.0650);left:117px;top:159.74px;font-size:11px;color:#cdcdcd;">Shading</div>
<div class="a t" id="t44" style="transform:scaleX(1.1155);left:175px;top:159.74px;font-size:11px;color:#cdcdcd;">Lighting</div>
<div class="a t" id="t45" style="transform:scaleX(1.0170);left:233px;top:159.74px;font-size:11px;color:#cdcdcd;">Show</div>
<div class="a t" id="t46" style="transform:scaleX(1.0358);left:277px;top:159.74px;font-size:11px;color:#cdcdcd;">Renderer</div>
<div class="a t" id="t47" style="transform:scaleX(0.9661);left:339px;top:159.74px;font-size:11px;color:#cdcdcd;">Panels</div>
<div class="a" style="left:73px;top:177px;width:1px;height:17px;background:#8c8c8c;"></div>
<div class="a" style="left:72px;top:180px;width:3px;height:10px;background:#7a7a7a;"></div>
<div class="a" style="left:217px;top:177px;width:1px;height:17px;background:#8c8c8c;"></div>
<div class="a" style="left:216px;top:180px;width:3px;height:10px;background:#7a7a7a;"></div>
<div class="a" style="left:362px;top:177px;width:1px;height:17px;background:#8c8c8c;"></div>
<div class="a" style="left:361px;top:180px;width:3px;height:10px;background:#7a7a7a;"></div>
<div class="a" style="left:506px;top:177px;width:1px;height:17px;background:#8c8c8c;"></div>
<div class="a" style="left:505px;top:180px;width:3px;height:10px;background:#7a7a7a;"></div>
<div class="a" style="left:593px;top:177px;width:1px;height:17px;background:#8c8c8c;"></div>
<div class="a" style="left:592px;top:180px;width:3px;height:10px;background:#7a7a7a;"></div>
<div class="a" style="left:623px;top:177px;width:1px;height:17px;background:#8c8c8c;"></div>
<div class="a" style="left:622px;top:180px;width:3px;height:10px;background:#7a7a7a;"></div>
<div class="a" style="left:690px;top:177px;width:1px;height:17px;background:#8c8c8c;"></div>
<div class="a" style="left:689px;top:180px;width:3px;height:10px;background:#7a7a7a;"></div>
<svg style="left:82px;top:177px" width="16" height="16"><rect x="0" y="5" width="10" height="7" fill="#d0d0d0"/><path d="M11 8.5 L15 4 V13 Z" fill="#d0d0d0"/></svg>
<svg style="left:100px;top:177px" width="16" height="16"><rect x="1" y="2" width="11" height="7.5" fill="#d0d0d0"/><path d="M9.5 5.5 L14 2 V9 Z" fill="#d0d0d0"/><rect x="0.5" y="8" width="6.5" height="6" fill="#4cb3c4"/><path d="M1.8 8.5 V6.5 A2 2 0 0 1 5.8 6.5 V8.5" stroke="#4cb3c4" fill="none" stroke-width="1.3"/><rect x="3.2" y="10" width="1" height="2" fill="#444"/></svg>
<svg style="left:119px;top:177px" width="16" height="16"><rect x="1" y="2" width="11" height="7.5" fill="#d0d0d0"/><path d="M9.5 5.5 L14 2 V9 Z" fill="#d0d0d0"/><circle cx="4.5" cy="10" r="4.2" fill="#4cb3c4"/><circle cx="4.5" cy="10" r="3.8" fill="none" stroke="#444" stroke-width="1" stroke-dasharray="1.2 1.2"/><circle cx="4.5" cy="10" r="1.6" fill="#444"/></svg>
<svg style="left:143px;top:177px" width="8" height="16"><path d="M0 2 H6 V15 L3 12 L0 15 Z" fill="#d0d0d0"/></svg>
<svg style="left:157px;top:177px" width="16" height="16"><path d="M6.3 3 L11 2 V11 L5.5 14 Z" fill="#4cb3c4"/><path d="M1 15.5 L3.5 11.5 H15 L12.5 15.5 Z" fill="none" stroke="#d0d0d0" stroke-width="1"/><path d="M6 13.5 H13" stroke="#d0d0d0" stroke-width="1"/></svg>
<svg style="left:177px;top:177px" width="16" height="16"><path d="M4 0 V8 M0 4 H8 M4 0 L2 2 M4 0 L6 2" stroke="#d0d0d0"/><circle cx="10" cy="9" r="3.5" fill="none" stroke="#4cb3c4" stroke-width="1.6"/><path d="M7.5 11.5 L4 15" stroke="#4cb3c4" stroke-width="2"/></svg>
<svg style="left:197px;top:177px" width="16" height="16"><path d="M2 12 L11 2 L14 5 L5 14 Z" fill="#d0d0d0"/><path d="M1 15 L3 11 L5 13 Z" fill="#4cb3c4"/><path d="M7 15 Q10 17 12 14" stroke="#d0d0d0" fill="none"/></svg>
<svg style="left:228px;top:179px" width="12" height="12"><path d="M0.5 0.5 H10.5 V10.5 H0.5 Z M4 0.5 V10.5 M7 0.5 V10.5 M0.5 4 H10.5 M0.5 7 H10.5" fill="none" stroke="#d0d0d0"/></svg>
<svg style="left:245px;top:179px" width="14" height="13"><rect x="0.5" y="0.5" width="13" height="11" fill="none" stroke="#d0d0d0"/><path d="M0.5 2.5 H13.5 M0.5 9.5 H13.5" stroke="#d0d0d0" stroke-dasharray="1 1"/></svg>
<svg style="left:263px;top:179px" width="15" height="13"><rect x="0.5" y="0.5" width="14" height="12" fill="none" stroke="#d0d0d0"/><circle cx="7.5" cy="6.5" r="2.5" fill="#4cb3c4"/></svg>
<div class="a" style="left:282px;top:177px;width:16px;height:16px;background:#3a3a3a;"></div>
<svg style="left:285px;top:180px" width="10" height="10"><circle cx="5" cy="5" r="4" fill="#4a4a4a"/></svg>
<svg style="left:302px;top:179px" width="15" height="13"><rect x="0.5" y="0.5" width="14" height="12" fill="none" stroke="#d0d0d0"/><path d="M2 6.5 H13 M7.5 2 V11" stroke="#4cb3c4" stroke-dasharray="1 1"/></svg>
<svg style="left:321px;top:179px" width="15" height="13"><rect x="0.5" y="0.5" width="13" height="12" fill="none" stroke="#d0d0d0"/><path d="M3 10 L6 6 L9 10 Z" fill="#d0d0d0"/><circle cx="9.5" cy="4.5" r="2" fill="#4cb3c4"/></svg>
<svg style="left:339px;top:179px" width="15" height="13"><rect x="0.5" y="0.5" width="14" height="12" fill="none" stroke="#d0d0d0"/><path d="M4 3 H11 M7.5 3 V10" stroke="#d0d0d0" stroke-width="1.8"/></svg>
<svg style="left:371px;top:178px" width="14" height="15"><path d="M7 1 L13 4 V11 L7 14 L1 11 V4 Z M1 4 L7 7 L13 4 M7 7 V14" fill="none" stroke="#d0d0d0"/></svg>
<div class="a" style="left:387px;top:176px;width:18px;height:18px;background:#5285a6;"></div>
<svg style="left:389px;top:178px" width="14" height="15"><path d="M7 1 L13 4 V11 L7 14 L1 11 V4 Z" fill="#4cb3c4" stroke="#d0d0d0" stroke-width="0.6"/><path d="M1 4 L7 7 L13 4 M7 7 V14" fill="none" stroke="#1f6d80"/></svg>
<svg style="left:409px;top:179px" width="14" height="14"><defs><pattern id="ck" width="4" height="4" patternUnits="userSpaceOnUse"><rect width="4" height="4" fill="#d8d8d8"/><rect width="2" height="2" fill="#2a2a2a"/><rect x="2" y="2" width="2" height="2" fill="#2a2a2a"/></pattern></defs><circle cx="6.5" cy="7" r="6" fill="url(#ck)"/><path d="M6.5 1 A6 6 0 0 0 6.5 13 Z" fill="#d0d0d0"/></svg>
<svg style="left:428px;top:178px" width="14" height="15"><path d="M7 1 L13 4 V11 L7 14 L1 11 V4 Z M1 4 L7 7 L13 4 M7 7 V14" fill="none" stroke="#d0d0d0"/><path d="M4 9 L7 10.5 L10 9" stroke="#4cb3c4" fill="none"/></svg>
<div class="a" style="left:444px;top:176px;width:18px;height:18px;background:#5285a6;"></div>
<svg style="left:446px;top:179px" width="14" height="14"><circle cx="7" cy="7" r="6.5" fill="url(#ck)"/></svg>
<svg style="left:465px;top:179px" width="14" height="14"><circle cx="7" cy="6" r="3.5" fill="#d0d0d0"/><rect x="5.5" y="9" width="3" height="4" fill="#d0d0d0"/><path d="M1 6 H2 M12 6 H13 M3 2 L4 3 M11 2 L10 3 M7 0 V1" stroke="#d0d0d0"/></svg>
<svg style="left:483px;top:179px" width="15" height="14"><path d="M1 11 L8 8" stroke="#d0d0d0" stroke-width="2"/><circle cx="10.5" cy="7" r="4.5" fill="#4cb3c4"/></svg>
<svg style="left:513px;top:178px" width="15" height="16"><circle cx="7" cy="6" r="5" fill="#d0d0d0"/><path d="M1 11 L8 15 L14 11 M2 13 L9 16" stroke="#4cb3c4" fill="none"/></svg>
<svg style="left:533px;top:178px" width="15" height="15"><circle cx="5" cy="10" r="4.5" fill="#777"/><circle cx="9.5" cy="5.5" r="4.5" fill="#d0d0d0"/></svg>
<div class="a" style="left:550px;top:176px;width:18px;height:18px;background:#5285a6;"></div>
<svg style="left:551px;top:177px" width="16" height="16"><circle cx="8" cy="8" r="6.5" fill="none" stroke="#4cb3c4" stroke-width="2.5"/><circle cx="8" cy="8" r="4" fill="none" stroke="#d0d0d0" stroke-width="1.5"/></svg>
<div class="a" style="left:570px;top:176px;width:17px;height:18px;background:#3a3a3a;"></div>
<svg style="left:572px;top:178px" width="14" height="14"><rect x="0" y="0" width="8" height="8" fill="#2b4b50"/><rect x="4" y="4" width="9" height="9" fill="#2b5a60"/></svg>
<svg style="left:602px;top:177px" width="14" height="17"><path d="M0.5 0.5 H8 V8 H0.5 Z" fill="none" stroke="#4cb3c4" stroke-dasharray="1.5 1"/><path d="M6 5 L6 15 L8.5 12.5 L10.5 16 L12 15 L10 11.5 L13 11.5 Z" fill="#d0d0d0"/></svg>
<svg style="left:632px;top:179px" width="14" height="14"><rect x="4.5" y="1.5" width="8" height="8" fill="none" stroke="#d0d0d0" stroke-width="1.6"/><rect x="1" y="5" width="8" height="8" fill="#d0d0d0"/></svg>
<svg style="left:651px;top:179px" width="14" height="14"><rect x="4.5" y="1.5" width="8" height="8" fill="none" stroke="#d0d0d0" stroke-width="1.6"/><rect x="1" y="6" width="7" height="7" fill="#d0d0d0"/></svg>
<div class="a" style="left:667px;top:176px;width:18px;height:18px;background:#3a3a3a;border:1px solid #5285a6;"></div>
<svg style="left:670px;top:179px" width="12" height="12"><rect x="0.5" y="0.5" width="11" height="11" fill="none" stroke="#d0d0d0"/><path d="M3 3 L9 9" stroke="#d0d0d0" stroke-width="1.5"/><path d="M2 2 L5 2 L2 5 Z" fill="#d0d0d0"/></svg>
<svg style="left:700px;top:179px" width="14" height="14"><circle cx="7" cy="7" r="6.5" fill="#d0d0d0"/><path d="M7 0.5 L9 6 M13 5 L8 8 M11 12 L6 9 M3 12 L6 7 M1 5 L7 5" stroke="#444" stroke-width="1.3"/></svg>
<div class="a" style="left:718px;top:177px;width:38px;height:14px;background:#2b2b2b;border-radius:2px;"></div>
<div class="a t" id="t48" style="transform:scaleX(0.9066);left:723.4px;top:179.09px;font-size:11.5px;color:#dcdcdc;">0.00</div>
<svg style="left:762px;top:178px" width="12" height="14"><path d="M6 1 A6 6 0 0 0 6 13 Z" fill="#d0d0d0"/><path d="M6 1 A6 6 0 0 1 6 13" stroke="#d0d0d0" fill="none" stroke-width="1.4"/></svg>
<div class="a" style="left:779px;top:177px;width:38px;height:14px;background:#2b2b2b;border-radius:2px;"></div>
<div class="a t" id="t49" style="transform:scaleX(0.9066);left:784.4px;top:179.09px;font-size:11.5px;color:#dcdcdc;">1.00</div>
<div class="a" style="left:820px;top:176px;width:18px;height:18px;background:#5285a6;"></div>
<svg style="left:821px;top:177px" width="16" height="16"><circle cx="8" cy="8" r="7.5" fill="#4cb3c4"/><circle cx="8" cy="8" r="6" fill="none" stroke="#1a5a66"/><text x="3.2" y="10.3" font-size="6" font-family="Liberation Sans" fill="#1a5a66">ON</text></svg>
<div class="a" style="left:841px;top:176px;width:117px;height:17px;background:#595959;"></div>
<div class="a" style="left:959px;top:176px;width:19px;height:17px;background:#555555;"></div>
<div class="a t" id="t50" style="transform:scaleX(0.9319);left:843.75px;top:179.29px;font-size:11.5px;color:#dcdcdc;">sRGB gamma</div>
<svg style="left:963px;top:182px" width="10" height="6"><path d="M0 0 H10 L5.0 6 Z" fill="#d0d0d0"/></svg>
<svg style="left:0;top:0" width="1920" height="1080"><path d="M239.5 520.3 L355.2 504.6 L341.5 513.8 L425.7 516.9 L397.6 536.1 L308.2 533.5 L291.0 543.9 Z" fill="none" stroke="#e8e82c" stroke-width="1.4" stroke-linejoin="round" opacity="1"/><path d="M1324.4 545.4 L1422.5 548.5 L1414.8 537.9 L1535.0 563.1 L1453.5 583.8 L1442.5 571.0 L1339.0 567.9 Z" fill="none" stroke="#e8e82c" stroke-width="1.4" stroke-linejoin="round" opacity="1"/><path d="M731.5 720.6 L836.1 725.6 L818.6 782.8 L875.7 785.9 L733.8 848.1 L647.9 774.2 L703.9 777.3 Z" fill="none" stroke="#e8e82c" stroke-width="1.4" stroke-linejoin="round" opacity="1"/><path d="M1122.4 561.0 L1115.8 573.0 L1102.8 584.5 L1083.8 595.2 L1059.1 605.0 L1029.4 613.6 L995.4 620.7 L958.0 626.1 L918.1 629.9 L876.6 631.8 L834.6 631.8 L793.1 629.9 L753.2 626.1 L715.8 620.7 L681.8 613.6 L652.1 605.0 L627.4 595.2 L608.4 584.5 L595.4 573.0 L588.8 561.0 L588.8 549.0 L595.4 537.0 L608.4 525.5 L627.4 514.8 L652.1 505.0 L681.8 496.4 L715.8 489.3 L753.2 483.9 L793.1 480.1 L834.6 478.2 L876.6 478.2 L918.1 480.1 L958.0 483.9 L995.4 489.3 L1029.4 496.4 L1059.1 505.0 L1083.8 514.8 L1102.8 525.5 L1115.8 537.0 L1122.4 549.0 Z" fill="none" stroke="#e8e82c" stroke-width="1.4" stroke-linejoin="round" opacity="1"/><path d="M1080.3 555.0 L1074.8 564.8 L1063.9 574.3 L1047.9 583.2 L1027.2 591.2 L1002.3 598.3 L973.8 604.1 L942.4 608.7 L908.9 611.7 L874.1 613.3 L838.9 613.3 L804.1 611.7 L770.6 608.7 L739.2 604.1 L710.7 598.3 L685.8 591.2 L665.1 583.2 L649.1 574.3 L638.2 564.8 L632.7 555.0 L632.7 545.0 L638.2 535.2 L649.1 525.7 L665.1 516.8 L685.8 508.8 L710.7 501.7 L739.2 495.9 L770.6 491.3 L804.1 488.3 L838.9 486.7 L874.1 486.7 L908.9 488.3 L942.4 491.3 L973.8 495.9 L1002.3 501.7 L1027.2 508.8 L1047.9 516.8 L1063.9 525.7 L1074.8 535.2 L1080.3 545.0 Z" fill="none" stroke="#e8e82c" stroke-width="1.4" stroke-linejoin="round" opacity="1"/><path d="M846.0 342.0 L861.0 339.0 L877.0 342.0 L861.0 345.0 Z" fill="none" stroke="#e8e82c" stroke-width="1.6" stroke-linejoin="round" opacity="1"/><g fill="none" stroke="#1e1e6a" stroke-width="1.1"><circle cx="864" cy="421" r="60"/><circle cx="862" cy="448" r="41"/><circle cx="858" cy="450" r="27"/><path d="M803 377 H919 L918 493 L804 490 Z M831 406 H893 V464 H831 Z M803 377 L831 406 M919 377 L893 406 M804 490 L831 464 M918 493 L893 464"/></g><defs><filter id="tb" filterUnits="userSpaceOnUse" x="600" y="280" width="500" height="360"><feGaussianBlur stdDeviation="0.9"/></filter><radialGradient id="sph" cx="0.42" cy="0.3" r="0.75"><stop offset="0" stop-color="#cdcdcd"/><stop offset="0.55" stop-color="#b0b0b0"/><stop offset="1" stop-color="#808080"/></radialGradient></defs><ellipse cx="862" cy="403" rx="25" ry="26" fill="url(#sph)"/><ellipse cx="860" cy="446" rx="21" ry="20" fill="url(#sph)"/><path d="M840 438 Q856 420 873 436" fill="none" stroke="#8a8a8a" stroke-width="1.2"/><path d="M820.3 328.2 L808.8 343.7 L789.9 369.7 L778.9 383.6 L785.1 388.4 L796.1 374.3 L815.2 348.3 L825.7 331.8 Z" fill="#6a6a6a" stroke="#6a6a6a" stroke-width="0.5"/><path d="M820.5 328.3 L809.0 343.9 L790.1 369.8 L779.1 383.8 L783.7 387.4 L794.8 373.3 L813.8 347.3 L824.5 331.0 Z" fill="#8a8a8a" filter="url(#tb)"/><path d="M821.3 328.8 L809.9 344.5 L791.0 370.5 L780.0 384.4 L782.2 386.1 L793.2 372.1 L812.2 346.1 L823.1 330.1 Z" fill="#9c9c9c" filter="url(#tb)"/><path d="M824.8 317.2 L823.6 325.3 L823.5 336.5 L827.0 368.5 L829.2 401.3 L831.2 440.6 L835.6 453.3 L844.4 450.7 L841.6 439.4 L839.6 400.7 L836.8 367.5 L832.5 335.5 L831.4 324.7 L828.6 316.8 Z" fill="#8e8e8e" stroke="#8e8e8e" stroke-width="0.5"/><path d="M824.9 317.2 L823.9 325.2 L823.8 336.4 L827.4 368.4 L829.6 401.3 L831.6 440.5 L835.9 453.2 L842.5 451.3 L839.3 439.7 L837.4 400.8 L834.7 367.7 L830.6 335.7 L829.7 324.8 L827.8 316.9 Z" fill="#b0b0b0" filter="url(#tb)"/><path d="M825.4 317.1 L825.0 325.2 L825.1 336.3 L828.7 368.3 L831.0 401.2 L833.0 440.4 L837.2 452.8 L840.2 451.9 L836.7 440.0 L834.7 401.0 L832.1 368.0 L828.2 336.0 L827.7 325.0 L826.8 317.0 Z" fill="#c8c8c8" filter="url(#tb)"/><path d="M767.3 350.1 L766.8 361.0 L771.1 371.3 L788.1 397.2 L806.8 423.1 L823.4 443.2 L839.6 455.1 L844.4 448.9 L830.0 436.8 L815.2 416.9 L797.9 390.8 L783.7 364.7 L781.2 355.0 L771.9 347.9 Z" fill="#8e8e8e" stroke="#8e8e8e" stroke-width="0.5"/><path d="M767.4 350.1 L767.3 360.8 L771.5 371.1 L788.4 397.0 L807.1 422.9 L823.7 442.9 L839.8 454.9 L843.4 450.3 L828.6 438.2 L813.4 418.2 L795.8 392.2 L781.0 366.1 L778.1 356.3 L770.9 348.3 Z" fill="#b0b0b0" filter="url(#tb)"/><path d="M768.1 349.7 L769.3 359.9 L773.3 370.2 L789.8 396.1 L808.3 422.0 L824.6 442.1 L840.4 454.0 L842.1 451.8 L826.9 439.8 L811.2 419.8 L793.2 393.8 L777.7 367.8 L774.4 357.9 L769.7 348.9 Z" fill="#c8c8c8" filter="url(#tb)"/><path d="M767.3 347.8 L760.0 353.6 L756.9 364.9 L738.8 391.3 L722.0 413.8 L718.1 426.5 L717.8 450.1 L719.8 480.1 L723.1 530.1 L725.7 560.0 L726.3 560.0 L726.9 529.9 L726.2 479.9 L725.6 449.9 L726.5 427.5 L729.2 418.2 L746.0 396.7 L766.9 371.1 L772.0 358.4 L771.9 350.2 Z" fill="#8e8e8e" stroke="#8e8e8e" stroke-width="0.5"/><path d="M767.4 347.9 L760.4 353.7 L757.3 365.1 L739.0 391.4 L722.2 414.0 L718.4 426.6 L718.1 450.0 L720.0 480.1 L723.2 530.1 L725.7 560.0 L726.2 560.0 L726.1 530.0 L724.9 479.9 L723.9 450.0 L724.7 427.3 L727.7 417.3 L744.5 395.6 L764.7 369.8 L769.4 357.4 L770.9 349.7 Z" fill="#b0b0b0" filter="url(#tb)"/><path d="M768.1 348.2 L762.1 354.4 L758.7 366.0 L740.0 392.2 L723.3 414.6 L719.6 426.7 L719.2 450.0 L720.9 480.1 L723.7 530.0 L725.8 560.0 L726.0 560.0 L725.1 530.0 L723.2 480.0 L721.9 450.0 L722.5 427.0 L725.8 416.1 L742.6 394.1 L762.1 368.2 L766.3 356.1 L769.7 349.1 Z" fill="#c8c8c8" filter="url(#tb)"/><path d="M778.2 378.0 L777.5 390.9 L784.7 400.3 L802.7 419.7 L823.0 443.6 L839.2 455.6 L844.8 448.4 L830.4 436.4 L811.7 412.3 L796.1 391.7 L792.5 383.1 L783.0 376.0 Z" fill="#8e8e8e" stroke="#8e8e8e" stroke-width="0.5"/><path d="M778.4 378.0 L778.0 390.6 L785.1 400.0 L803.0 419.5 L823.2 443.4 L839.4 455.3 L843.6 450.0 L828.8 437.9 L809.8 413.9 L793.6 393.5 L789.3 384.8 L782.0 376.4 Z" fill="#b0b0b0" filter="url(#tb)"/><path d="M779.1 377.7 L780.1 389.5 L786.7 398.8 L804.3 418.4 L824.3 442.3 L840.2 454.3 L842.1 451.8 L826.9 439.8 L807.4 415.8 L790.7 395.8 L785.4 386.8 L780.7 376.9 Z" fill="#c8c8c8" filter="url(#tb)"/><path d="M778.3 375.7 L769.8 381.5 L766.4 390.4 L745.5 417.1 L724.0 443.5 L730.0 448.5 L752.5 422.9 L775.6 397.6 L782.2 388.5 L782.9 378.3 Z" fill="#8e8e8e" stroke="#8e8e8e" stroke-width="0.5"/><path d="M778.5 375.8 L770.2 381.7 L766.7 390.7 L745.8 417.3 L724.2 443.7 L728.7 447.4 L751.0 421.7 L773.6 396.0 L779.5 387.0 L781.9 377.7 Z" fill="#b0b0b0" filter="url(#tb)"/><path d="M779.1 376.2 L772.0 382.7 L768.0 391.7 L746.7 418.1 L725.1 444.4 L727.1 446.1 L749.2 420.1 L771.2 394.2 L776.3 385.2 L780.7 377.1 Z" fill="#c8c8c8" filter="url(#tb)"/><path d="M787.0 406.0 L787.0 440.0 L791.0 440.0 L791.0 406.0 Z" fill="#8e8e8e" stroke="#8e8e8e" stroke-width="0.5"/><path d="M787.2 406.0 L787.2 440.0 L790.1 440.0 L790.1 406.0 Z" fill="#b0b0b0" filter="url(#tb)"/><path d="M787.7 406.0 L787.7 440.0 L789.1 440.0 L789.1 406.0 Z" fill="#c8c8c8" filter="url(#tb)"/><path d="M788.0 447.0 L789.5 482.0 L790.5 482.0 L792.0 447.0 Z" fill="#8e8e8e" stroke="#8e8e8e" stroke-width="0.5"/><path d="M788.2 447.0 L789.5 482.0 L790.3 482.0 L791.1 447.0 Z" fill="#b0b0b0" filter="url(#tb)"/><path d="M788.7 447.0 L789.7 482.0 L790.0 482.0 L790.1 447.0 Z" fill="#c8c8c8" filter="url(#tb)"/><path d="M802.2 417.2 L806.7 434.8 L820.9 449.2 L838.6 463.9 L845.4 456.1 L829.1 440.8 L817.3 427.2 L806.8 414.8 Z" fill="#8e8e8e" stroke="#8e8e8e" stroke-width="0.5"/><path d="M802.3 417.1 L807.1 434.5 L821.2 448.9 L838.8 463.6 L844.0 457.8 L827.3 442.6 L815.0 428.9 L805.8 415.3 Z" fill="#b0b0b0" filter="url(#tb)"/><path d="M803.0 416.8 L808.5 433.4 L822.4 447.7 L839.8 462.5 L842.2 459.8 L825.2 444.8 L812.3 430.8 L804.6 415.9 Z" fill="#c8c8c8" filter="url(#tb)"/><path d="M802.4 414.4 L792.5 423.4 L783.3 442.8 L775.4 460.6 L762.4 483.4 L761.1 504.9 L764.1 547.1 L767.2 598.0 L767.8 598.0 L767.9 546.9 L768.9 505.1 L771.6 486.6 L784.6 465.4 L792.7 447.2 L801.5 428.6 L806.6 417.6 Z" fill="#8e8e8e" stroke="#8e8e8e" stroke-width="0.5"/><path d="M802.6 414.5 L792.8 423.6 L783.6 443.0 L775.7 460.8 L762.7 483.5 L761.4 504.9 L764.2 547.0 L767.2 598.0 L767.7 598.0 L767.1 547.0 L767.2 505.0 L769.6 485.9 L782.6 464.4 L790.7 446.2 L799.6 427.5 L805.7 416.9 Z" fill="#b0b0b0" filter="url(#tb)"/><path d="M803.1 415.0 L794.1 424.3 L784.9 443.6 L777.0 461.4 L764.0 483.9 L762.5 505.0 L764.7 547.0 L767.3 598.0 L767.5 598.0 L766.1 547.0 L765.2 505.0 L767.2 485.1 L780.2 463.1 L788.2 445.1 L797.2 426.1 L804.6 416.1 Z" fill="#c8c8c8" filter="url(#tb)"/><path d="M904.5 321.2 L906.6 329.8 L911.0 334.7 L925.3 352.2 L939.9 369.0 L950.7 380.2 L957.3 373.8 L946.7 363.0 L933.5 345.8 L920.2 327.3 L915.4 322.2 L907.5 318.8 Z" fill="#8e8e8e" stroke="#8e8e8e" stroke-width="0.5"/><path d="M904.6 321.2 L906.9 329.6 L911.4 334.4 L925.6 352.0 L940.1 368.8 L951.0 380.0 L955.9 375.2 L945.2 364.3 L931.7 347.2 L918.2 328.9 L913.5 323.8 L906.9 319.3 Z" fill="#b0b0b0" filter="url(#tb)"/><path d="M905.0 320.8 L908.1 328.5 L912.6 333.4 L926.7 351.1 L941.1 368.0 L951.9 379.1 L954.2 376.8 L943.5 365.8 L929.6 348.8 L915.8 330.8 L911.2 325.8 L906.1 319.9 Z" fill="#c8c8c8" filter="url(#tb)"/><path d="M955.8 382.0 L956.4 460.0 L957.4 493.0 L958.6 493.0 L961.6 460.0 L962.2 382.0 Z" fill="#8e8e8e" stroke="#8e8e8e" stroke-width="0.5"/><path d="M956.0 382.0 L956.6 460.0 L957.4 493.0 L958.4 493.0 L960.5 460.0 L960.9 382.0 Z" fill="#b0b0b0" filter="url(#tb)"/><path d="M956.9 382.0 L957.3 460.0 L957.6 493.0 L958.0 493.0 L959.1 460.0 L959.2 382.0 Z" fill="#c8c8c8" filter="url(#tb)"/><path d="M953.4 355.1 L954.3 370.6 L973.1 392.2 L995.1 413.4 L1002.3 423.2 L1004.8 432.3 L1005.4 459.9 L1005.9 489.9 L1007.7 527.0 L1008.3 527.0 L1011.1 490.1 L1013.2 460.1 L1013.8 431.7 L1011.7 418.8 L1002.9 406.6 L982.9 383.8 L968.5 361.4 L958.2 352.9 Z" fill="#8e8e8e" stroke="#8e8e8e" stroke-width="0.5"/><path d="M953.6 355.0 L954.8 370.3 L973.4 391.9 L995.4 413.2 L1002.6 423.1 L1005.1 432.2 L1005.7 459.9 L1006.1 490.0 L1007.7 527.0 L1008.2 527.0 L1010.0 490.0 L1011.5 460.0 L1011.9 431.8 L1009.7 419.7 L1001.2 408.0 L980.8 385.6 L965.4 363.4 L957.1 353.4 Z" fill="#b0b0b0" filter="url(#tb)"/><path d="M954.3 354.7 L956.8 369.0 L974.8 390.7 L996.5 412.2 L1003.9 422.4 L1006.3 432.2 L1006.8 460.0 L1006.8 490.0 L1007.8 527.0 L1008.0 527.0 L1008.6 490.0 L1009.5 460.0 L1009.5 432.0 L1007.2 420.9 L999.2 409.8 L978.2 387.8 L961.8 365.8 L955.9 353.9 Z" fill="#c8c8c8" filter="url(#tb)"/><path d="M953.6 352.6 L939.6 365.5 L927.5 384.3 L911.6 403.7 L898.0 422.3 L888.3 436.4 L895.7 441.6 L905.4 427.7 L919.6 410.3 L936.5 391.7 L952.4 374.5 L958.0 355.4 Z" fill="#8e8e8e" stroke="#8e8e8e" stroke-width="0.5"/><path d="M953.7 352.7 L940.1 365.8 L927.8 384.5 L911.9 403.9 L898.3 422.5 L888.5 436.6 L894.1 440.5 L903.8 426.5 L917.9 408.9 L934.6 390.1 L949.6 372.5 L957.1 354.8 Z" fill="#b0b0b0" filter="url(#tb)"/><path d="M954.4 353.1 L941.8 367.1 L929.1 385.6 L913.0 404.9 L899.3 423.2 L889.6 437.3 L892.2 439.1 L901.9 425.1 L915.8 407.2 L932.2 388.2 L946.3 370.2 L955.9 354.1 Z" fill="#c8c8c8" filter="url(#tb)"/><path d="M904.1 318.5 L898.5 330.2 L895.2 351.1 L889.6 378.0 L884.2 406.3 L883.1 428.3 L886.6 446.1 L892.6 463.9 L896.8 488.2 L898.9 530.0 L901.0 603.0 L901.6 603.0 L902.7 530.0 L903.2 487.8 L900.8 462.1 L895.4 443.9 L892.9 427.7 L893.8 407.7 L899.8 380.0 L905.4 352.9 L907.5 331.8 L907.9 319.5 Z" fill="#8e8e8e" stroke="#8e8e8e" stroke-width="0.5"/><path d="M904.2 318.6 L898.8 330.3 L895.5 351.2 L890.0 378.0 L884.5 406.4 L883.5 428.2 L886.9 446.0 L892.9 463.8 L897.0 488.2 L899.0 530.0 L901.0 603.0 L901.5 603.0 L901.9 530.0 L901.8 487.9 L899.1 462.5 L893.5 444.4 L890.8 427.9 L891.8 407.4 L897.6 379.6 L903.2 352.5 L905.6 331.4 L907.1 319.3 Z" fill="#b0b0b0" filter="url(#tb)"/><path d="M904.8 318.7 L900.1 330.5 L897.0 351.4 L891.4 378.3 L885.9 406.6 L884.8 428.2 L888.1 445.7 L894.0 463.6 L897.9 488.1 L899.5 530.0 L901.1 603.0 L901.3 603.0 L900.9 530.0 L900.2 488.0 L896.9 463.0 L891.2 444.9 L888.2 428.0 L889.2 407.0 L895.0 379.1 L900.6 352.0 L903.2 331.0 L906.1 319.0 Z" fill="#c8c8c8" filter="url(#tb)"/><path d="M923.1 380.6 L912.7 389.8 L901.2 413.5 L893.5 428.8 L901.5 433.2 L910.4 418.5 L923.9 396.2 L927.5 383.4 Z" fill="#8e8e8e" stroke="#8e8e8e" stroke-width="0.5"/><path d="M923.3 380.7 L913.1 390.0 L901.6 413.7 L893.8 429.0 L899.8 432.3 L908.4 417.4 L921.5 394.8 L926.6 382.8 Z" fill="#b0b0b0" filter="url(#tb)"/><path d="M923.9 381.1 L914.6 390.9 L902.8 414.4 L894.9 429.6 L897.7 431.1 L906.0 416.1 L918.6 393.2 L925.4 382.1 Z" fill="#c8c8c8" filter="url(#tb)"/><path d="M923.1 383.4 L926.7 396.5 L945.4 424.2 L964.0 451.9 L970.5 458.7 L969.1 479.8 L969.8 530.0 L970.5 567.0 L971.1 567.0 L973.6 530.0 L976.9 480.2 L979.5 457.3 L972.6 446.1 L955.2 417.8 L937.7 389.5 L927.5 380.6 Z" fill="#8e8e8e" stroke="#8e8e8e" stroke-width="0.5"/><path d="M923.3 383.3 L927.1 396.3 L945.7 423.9 L964.3 451.7 L970.8 458.6 L969.4 479.8 L969.9 530.0 L970.5 567.0 L971.0 567.0 L972.8 530.0 L975.2 480.1 L977.6 457.6 L970.8 447.4 L953.1 419.2 L935.3 391.0 L926.6 381.2 Z" fill="#b0b0b0" filter="url(#tb)"/><path d="M923.9 382.9 L928.6 395.3 L947.1 423.1 L965.5 450.9 L972.1 458.4 L970.5 479.9 L970.4 530.0 L970.6 567.0 L970.8 567.0 L971.8 530.0 L973.2 480.0 L975.2 458.0 L968.5 448.9 L950.5 420.8 L932.5 392.8 L925.4 381.9 Z" fill="#c8c8c8" filter="url(#tb)"/><path d="M764.4 349.0 L719.0 413.0 L730.7 421.5 L771.0 364.4 Z" fill="none" stroke="#ff1a1a" stroke-width="1.1" stroke-linejoin="round" opacity="1"/><path d="M760.0 356.7 L723.0 410.0 L727.0 415.0 L766.0 361.0 Z" fill="none" stroke="#ff1a1a" stroke-width="0.8800000000000001" stroke-linejoin="round" opacity="0.8"/><path d="M768.3 385.2 L725.6 440.9 L730.7 447.4 L785.2 399.4 Z" fill="none" stroke="#ff1a1a" stroke-width="1.1" stroke-linejoin="round" opacity="1"/><path d="M764.0 390.0 L728.0 437.0 L734.0 443.0 L780.0 404.0 Z" fill="none" stroke="#ff1a1a" stroke-width="0.8800000000000001" stroke-linejoin="round" opacity="0.8"/><path d="M820.2 325.6 L834.5 324.3 L839.6 391.7 L825.4 393.0 Z" fill="none" stroke="#ff1a1a" stroke-width="1.1" stroke-linejoin="round" opacity="1"/><path d="M824.0 333.0 L836.0 332.0 L838.0 388.0 L826.0 389.0 Z" fill="none" stroke="#ff1a1a" stroke-width="0.8800000000000001" stroke-linejoin="round" opacity="0.8"/><path d="M826.7 406.0 L843.5 403.3 L845.0 445.0 L830.0 447.0 Z" fill="none" stroke="#ff1a1a" stroke-width="1.1" stroke-linejoin="round" opacity="1"/><path d="M808.5 324.3 L822.8 322.3 L824.0 343.7 L809.8 374.8 L783.9 365.7 Z" fill="none" stroke="#ff1a1a" stroke-width="1.1" stroke-linejoin="round" opacity="1"/><path d="M812.0 335.0 L820.0 347.0 L800.0 372.0 L792.0 362.0 Z" fill="none" stroke="#ff1a1a" stroke-width="0.8800000000000001" stroke-linejoin="round" opacity="0.8"/><path d="M777.0 365.0 L792.0 360.0 L842.0 438.0 L832.0 452.0 Z" fill="none" stroke="#ff1a1a" stroke-width="1.1" stroke-linejoin="round" opacity="1"/><path d="M787.0 382.0 L800.0 378.0 L846.0 440.0 L836.0 454.0 Z" fill="none" stroke="#ff1a1a" stroke-width="0.9900000000000001" stroke-linejoin="round" opacity="1"/><path d="M792.0 396.0 L806.0 392.0 L848.0 444.0 L838.0 456.0 Z" fill="none" stroke="#ff1a1a" stroke-width="0.8800000000000001" stroke-linejoin="round" opacity="0.8"/><path d="M763.7 469.8 L790.5 414.3 L804.4 418.9 L783.0 472.6 Z" fill="none" stroke="#ff1a1a" stroke-width="1.1" stroke-linejoin="round" opacity="1"/><path d="M767.0 466.0 L792.0 418.0 L800.0 421.0 L778.0 470.0 Z" fill="none" stroke="#ff1a1a" stroke-width="0.8800000000000001" stroke-linejoin="round" opacity="0.7"/><path d="M805.0 417.0 L841.5 444.8 L834.0 469.0 L795.0 439.0 Z" fill="none" stroke="#ff1a1a" stroke-width="1.1" stroke-linejoin="round" opacity="1"/><path d="M800.0 425.0 L838.0 450.0 L832.0 462.0 L797.0 434.0 Z" fill="none" stroke="#ff1a1a" stroke-width="0.8800000000000001" stroke-linejoin="round" opacity="0.7"/><path d="M779.4 406.0 L783.0 406.0 L783.0 443.0 L779.4 443.0 Z" fill="none" stroke="#ff1a1a" stroke-width="0.9900000000000001" stroke-linejoin="round" opacity="1"/><path d="M824.8 402.0 L843.3 402.0 L843.3 433.7 L824.8 433.7 Z" fill="none" stroke="#ff1a1a" stroke-width="0.9900000000000001" stroke-linejoin="round" opacity="1"/><path d="M785.2 449.0 L799.0 449.0 L801.0 488.0 L787.0 488.0 Z" fill="none" stroke="#ff1a1a" stroke-width="1.1" stroke-linejoin="round" opacity="1"/><path d="M781.7 452.0 L796.0 452.0 L797.0 485.0 L783.0 485.0 Z" fill="none" stroke="#ff1a1a" stroke-width="0.8800000000000001" stroke-linejoin="round" opacity="0.8"/><path d="M714.5 452.2 L716.5 520.2 L733.5 519.8 L731.5 451.8 Z" fill="none" stroke="#ff1a1a" stroke-width="1.1" stroke-linejoin="round" opacity="1"/><path d="M716.3 450.4 L718.3 518.4 L735.3 518.0 L733.3 450.0 Z" fill="none" stroke="#ff1a1a" stroke-width="0.9" stroke-linejoin="round" opacity="0.8"/><path d="M716.0 522.4 L718.0 567.4 L734.0 566.6 L732.0 521.6 Z" fill="none" stroke="#ff1a1a" stroke-width="1.1" stroke-linejoin="round" opacity="1"/><path d="M717.8 520.6 L719.8 565.6 L735.8 564.8 L733.8 519.8 Z" fill="none" stroke="#ff1a1a" stroke-width="0.9" stroke-linejoin="round" opacity="0.8"/><path d="M774.8 456.6 L762.8 472.6 L777.2 483.4 L789.2 467.4 Z" fill="none" stroke="#ff1a1a" stroke-width="1.1" stroke-linejoin="round" opacity="1"/><path d="M776.6 454.8 L764.6 470.8 L779.0 481.6 L791.0 465.6 Z" fill="none" stroke="#ff1a1a" stroke-width="0.9" stroke-linejoin="round" opacity="0.8"/><path d="M757.0 492.0 L757.0 541.0 L777.0 541.0 L777.0 492.0 Z" fill="none" stroke="#ff1a1a" stroke-width="1.1" stroke-linejoin="round" opacity="1"/><path d="M758.8 490.2 L758.8 539.2 L778.8 539.2 L778.8 490.2 Z" fill="none" stroke="#ff1a1a" stroke-width="0.9" stroke-linejoin="round" opacity="0.8"/><path d="M757.5 543.0 L757.5 593.0 L774.5 593.0 L774.5 543.0 Z" fill="none" stroke="#ff1a1a" stroke-width="1.1" stroke-linejoin="round" opacity="1"/><path d="M759.3 541.2 L759.3 591.2 L776.3 591.2 L776.3 541.2 Z" fill="none" stroke="#ff1a1a" stroke-width="0.9" stroke-linejoin="round" opacity="0.8"/><path d="M898.2 320.4 L882.2 400.4 L897.8 403.6 L913.8 323.6 Z" fill="none" stroke="#2828ff" stroke-width="1.1" stroke-linejoin="round" opacity="1"/><path d="M900.0 318.6 L884.0 398.6 L899.6 401.8 L915.6 321.8 Z" fill="none" stroke="#2828ff" stroke-width="0.9" stroke-linejoin="round" opacity="0.8"/><path d="M883.1 401.1 L880.1 424.1 L893.9 425.9 L896.9 402.9 Z" fill="none" stroke="#2828ff" stroke-width="1.1" stroke-linejoin="round" opacity="1"/><path d="M884.9 399.3 L881.9 422.3 L895.7 424.1 L898.7 401.1 Z" fill="none" stroke="#2828ff" stroke-width="0.9" stroke-linejoin="round" opacity="0.8"/><path d="M911.0 324.0 L924.0 325.0 L951.7 355.8 L940.0 368.0 L912.0 340.0 Z" fill="none" stroke="#2828ff" stroke-width="1.1" stroke-linejoin="round" opacity="1"/><path d="M914.0 330.0 L922.0 331.0 L946.0 356.0 L938.0 363.0 Z" fill="none" stroke="#2828ff" stroke-width="0.8800000000000001" stroke-linejoin="round" opacity="0.8"/><path d="M967.5 361.3 L1010.8 413.0 L995.2 424.6 L951.8 374.6 Z" fill="none" stroke="#2828ff" stroke-width="1.1" stroke-linejoin="round" opacity="1"/><path d="M970.0 366.0 L1007.0 412.0 L997.0 420.0 L958.0 373.0 Z" fill="none" stroke="#2828ff" stroke-width="0.8800000000000001" stroke-linejoin="round" opacity="0.75"/><path d="M949.7 355.1 L893.7 427.1 L906.3 436.9 L962.3 364.9 Z" fill="none" stroke="#2828ff" stroke-width="1.1" stroke-linejoin="round" opacity="1"/><path d="M951.5 353.3 L895.5 425.3 L908.1 435.1 L964.1 363.1 Z" fill="none" stroke="#2828ff" stroke-width="0.9" stroke-linejoin="round" opacity="0.8"/><path d="M919.1 382.2 L892.1 424.2 L903.9 431.8 L930.9 389.8 Z" fill="none" stroke="#2828ff" stroke-width="1.1" stroke-linejoin="round" opacity="1"/><path d="M920.9 380.4 L893.9 422.4 L905.7 430.0 L932.7 388.0 Z" fill="none" stroke="#2828ff" stroke-width="0.9" stroke-linejoin="round" opacity="0.8"/><path d="M921.7 395.0 L968.7 454.0 L981.3 444.0 L934.3 385.0 Z" fill="none" stroke="#2828ff" stroke-width="1.1" stroke-linejoin="round" opacity="1"/><path d="M923.5 393.2 L970.5 452.2 L983.1 442.2 L936.1 383.2 Z" fill="none" stroke="#2828ff" stroke-width="0.9" stroke-linejoin="round" opacity="0.8"/><path d="M1000.0 430.0 L1000.0 482.0 L1016.0 482.0 L1016.0 430.0 Z" fill="none" stroke="#2828ff" stroke-width="1.1" stroke-linejoin="round" opacity="1"/><path d="M1001.8 428.2 L1001.8 480.2 L1017.8 480.2 L1017.8 428.2 Z" fill="none" stroke="#2828ff" stroke-width="0.9" stroke-linejoin="round" opacity="0.8"/><path d="M1001.0 487.0 L1001.0 532.0 L1015.0 532.0 L1015.0 487.0 Z" fill="none" stroke="#2828ff" stroke-width="1.1" stroke-linejoin="round" opacity="1"/><path d="M1002.8 485.2 L1002.8 530.2 L1016.8 530.2 L1016.8 485.2 Z" fill="none" stroke="#2828ff" stroke-width="0.9" stroke-linejoin="round" opacity="0.8"/><path d="M965.0 460.0 L965.0 527.0 L979.0 527.0 L979.0 460.0 Z" fill="none" stroke="#2828ff" stroke-width="1.1" stroke-linejoin="round" opacity="1"/><path d="M966.8 458.2 L966.8 525.2 L980.8 525.2 L980.8 458.2 Z" fill="none" stroke="#2828ff" stroke-width="0.9" stroke-linejoin="round" opacity="0.8"/><path d="M965.0 527.0 L965.0 575.0 L979.0 575.0 L979.0 527.0 Z" fill="none" stroke="#2828ff" stroke-width="1.1" stroke-linejoin="round" opacity="1"/><path d="M966.8 525.2 L966.8 573.2 L980.8 573.2 L980.8 525.2 Z" fill="none" stroke="#2828ff" stroke-width="0.9" stroke-linejoin="round" opacity="0.8"/><path d="M891.0 497.0 L891.0 545.0 L909.0 545.0 L909.0 497.0 Z" fill="none" stroke="#2828ff" stroke-width="1.1" stroke-linejoin="round" opacity="1"/><path d="M892.8 495.2 L892.8 543.2 L910.8 543.2 L910.8 495.2 Z" fill="none" stroke="#2828ff" stroke-width="0.9" stroke-linejoin="round" opacity="0.8"/><path d="M894.0 548.0 L894.0 598.0 L908.0 598.0 L908.0 548.0 Z" fill="none" stroke="#2828ff" stroke-width="1.1" stroke-linejoin="round" opacity="1"/><path d="M895.8 546.2 L895.8 596.2 L909.8 596.2 L909.8 546.2 Z" fill="none" stroke="#2828ff" stroke-width="0.9" stroke-linejoin="round" opacity="0.8"/><path d="M949.0 453.0 L949.0 493.0 L967.0 493.0 L967.0 453.0 Z" fill="none" stroke="#2828ff" stroke-width="1.1" stroke-linejoin="round" opacity="1"/><path d="M950.8 451.2 L950.8 491.2 L968.8 491.2 L968.8 451.2 Z" fill="none" stroke="#2828ff" stroke-width="0.9" stroke-linejoin="round" opacity="0.8"/><path d="M947.0 386.0 L947.0 458.0 L967.0 458.0 L967.0 386.0 Z" fill="none" stroke="#2828ff" stroke-width="1.1" stroke-linejoin="round" opacity="1"/><path d="M948.8 384.2 L948.8 456.2 L968.8 456.2 L968.8 384.2 Z" fill="none" stroke="#2828ff" stroke-width="0.9" stroke-linejoin="round" opacity="0.8"/><path d="M897.0 440.0 L927.0 440.0 L933.0 425.0 L956.0 425.0" fill="none" stroke="#e8e82c" stroke-width="1.6" stroke-linejoin="round" opacity="1"/><path d="M921.0 415.0 L940.0 420.0" fill="none" stroke="#e8e82c" stroke-width="1.6" stroke-linejoin="round" opacity="1"/><ellipse cx="841.5" cy="471" rx="5.2" ry="7" fill="#ff1a1a"/><path d="M867 475 L879 464" stroke="#5ccff2" stroke-width="8.5" stroke-linecap="round"/><path d="M865 474 L870 470 M874 467 L879 463" stroke="#3aa8d0" stroke-width="1" stroke-dasharray="1 1.5"/></svg>
<div class="a t" id="t51" style="transform:scaleX(0.9343);left:831.5px;top:875.75px;font-size:11px;color:#f0f0f0;font-weight:bold;">persp</div>
<svg style="left:85px;top:846px" width="32" height="30"><path d="M9.5 24 V10" stroke="#22dd22" stroke-width="1.4"/><path d="M9.5 24 H21 L23 25" stroke="#ee2222" stroke-width="1.3" fill="none"/><text x="6.5" y="7" font-size="10" font-family="Liberation Sans" font-weight="bold" fill="#22dd22">y</text><text x="21.5" y="22" font-size="10" font-family="Liberation Sans" font-weight="bold" fill="#ff2020">x</text><text x="4.5" y="27" font-size="8" font-family="Liberation Sans" font-weight="bold" fill="#2020ff">z</text></svg>
<div class="a" style="left:1637px;top:153px;width:4px;height:745px;background:#3c3c3c;"></div>
<div class="a" style="left:1641px;top:153px;width:263px;height:745px;background:#444444;"></div>
<svg style="left:1842px;top:157px" width="16" height="14"><path d="M7 0 L10 4 H4 Z" fill="#4caf50"/><path d="M0 14 L2 9 L5 13 Z" fill="#3c78f0"/><path d="M14 14 L12 9 L9 13 Z" fill="#e04040"/><path d="M7 4 V8 L3 11 M7 8 L11 11" stroke="#d0d0d0" stroke-width="1.2" fill="none"/></svg>
<svg style="left:1862px;top:157px" width="15" height="14"><path d="M13 7 A6 6 0 1 0 7 13" fill="none" stroke="#4cb3c4" stroke-width="3.5"/><path d="M8 8 L14 8 L11 13 Z" fill="#888"/></svg>
<svg style="left:1884px;top:157px" width="15" height="15"><path d="M1 1 V14 H14" stroke="#8a8a8a" fill="none"/><path d="M3 12 L13 2" stroke="#4cb3c4" stroke-width="1.8"/><path d="M9 1 H14 V6 Z" fill="#4cb3c4"/></svg>
<div class="a t" id="t52" style="transform:scaleX(1.0218);left:1653px;top:180.04px;font-size:11px;color:#cdcdcd;">Channels</div>
<div class="a t" id="t53" style="transform:scaleX(1.0544);left:1716px;top:180.04px;font-size:11px;color:#cdcdcd;">Edit</div>
<div class="a t" id="t54" style="transform:scaleX(1.0536);left:1751.5px;top:180.04px;font-size:11px;color:#cdcdcd;">Object</div>
<div class="a t" id="t55" style="transform:scaleX(1.0533);left:1800px;top:180.04px;font-size:11px;color:#cdcdcd;">Show</div>
<div class="a" style="left:1646px;top:197px;width:254px;height:342px;background:#2b2b2b;"></div>
<div class="a" style="left:1730px;top:541px;width:86px;height:3px;background-image:radial-gradient(circle,#8a8a8a 0.6px,transparent 0.8px);background-size:3px 3px;"></div>
<div class="a" style="left:1645px;top:551px;width:256px;height:344px;background:#3a3a3a;border:1px solid #363636;"></div>
<div class="a" style="left:1647px;top:553px;width:64px;height:16px;background:#444444;border:1px solid #3a3a3a;border-bottom:none;border-radius:2px 2px 0 0;"></div>
<div class="a" style="left:1714px;top:553px;width:52px;height:16px;background:#3c3c3c;border:1px solid #363636;border-bottom:none;border-radius:2px 2px 0 0;"></div>
<div class="a" style="left:1647px;top:568px;width:251px;height:326px;background:#444444;"></div>
<div class="a t" id="t56" style="transform:scaleX(1.0122);left:1660px;top:555.77px;font-size:11.3px;color:#e0e0e0;">Display</div>
<div class="a t" id="t57" style="transform:scaleX(1.0097);left:1727px;top:555.77px;font-size:11.3px;color:#9a9a9a;">Anim</div>
<div class="a t" id="t58" style="transform:scaleX(0.9234);left:1656px;top:573.64px;font-size:11px;color:#cdcdcd;">Layers</div>
<div class="a t" id="t59" style="transform:scaleX(1.0812);left:1702.5px;top:573.64px;font-size:11px;color:#cdcdcd;">Options</div>
<div class="a t" id="t60" style="transform:scaleX(1.0387);left:1759px;top:573.64px;font-size:11px;color:#cdcdcd;">Help</div>
<svg style="left:1798px;top:590px" width="100" height="20"><path d="M5.7 11.5 L12 7.6 L14 9 V16.2 L12 16.2 Z" fill="#d4d4d4"/><path d="M16.8 7 L20 10.6 H18 V15.5 H15.6 V10.6 H13.6 Z" fill="#4cb3c4" stroke="#333" stroke-width="0.6"/><path d="M28 11.3 L35 7 L37 8.5 V16 L35 16 Z" fill="#d4d4d4"/><path d="M38.8 15.5 L42.2 11.8 H40.2 V7.5 H37.6 V11.8 H35.6 Z" fill="#4cb3c4" stroke="#333" stroke-width="0.6"/><path d="M55.2 11.3 L62 7.4 L67.7 12 L62 16 Z" fill="#d4d4d4"/><path d="M66.9 5 V11 M63.9 8 H69.9" stroke="#333" stroke-width="3.4"/><path d="M66.9 5.3 V10.7 M64.2 8 H69.6" stroke="#4cb3c4" stroke-width="2"/><path d="M79.2 11.3 L85 8 L91.7 11.3 L85.4 16 Z" fill="#d4d4d4"/><circle cx="88.8" cy="7.9" r="3.6" fill="#333"/><circle cx="88.8" cy="7.9" r="3" fill="#4cb3c4"/></svg>
<div class="a" style="left:1649px;top:617px;width:247px;height:262px;background:#2b2b2b;"></div>
<div class="a" style="left:1649px;top:617px;width:247px;height:20px;background:#5285a6;"></div>
<div class="a" style="left:1653px;top:621px;width:20px;height:13px;background:#5a8fb0;border:1px solid #3b6a87;border-radius:3px;"></div>
<div class="a" style="left:1676px;top:621px;width:20px;height:13px;background:#5a8fb0;border:1px solid #3b6a87;border-radius:3px;"></div>
<div class="a" style="left:1699px;top:621px;width:20px;height:13px;background:#5a8fb0;border:1px solid #3b6a87;border-radius:3px;"></div>
<div class="a t" id="t61" style="left:1658.5px;top:621.59px;font-size:11.5px;color:#1c2a35;">V</div>
<div class="a t" id="t62" style="left:1682px;top:621.59px;font-size:11.5px;color:#1c2a35;">P</div>
<svg style="left:1722px;top:619px" width="16" height="17"><rect x="0.5" y="0.5" width="15" height="16" fill="#222" stroke="#222"/><path d="M1 16 L15 1" stroke="#d8d8d8" stroke-width="1"/><path d="M15 1 V16" stroke="#d8d8d8" stroke-width="1"/></svg>
<div class="a t" id="t63" style="transform:scaleX(1.0157);left:1741px;top:622.09px;font-size:11.5px;color:#111;">Controls</div>
<div class="a" style="left:1653px;top:641px;width:20px;height:13px;background:#2b2b2b;border:1px solid #1e1e1e;border-radius:3px;"></div>
<div class="a" style="left:1676px;top:641px;width:20px;height:13px;background:#2b2b2b;border:1px solid #1e1e1e;border-radius:3px;"></div>
<div class="a" style="left:1699px;top:641px;width:20px;height:13px;background:#2b2b2b;border:1px solid #1e1e1e;border-radius:3px;"></div>
<div class="a t" id="t64" style="left:1682px;top:641.59px;font-size:11.5px;color:#3c3c3c;">P</div>
<svg style="left:1722px;top:639px" width="16" height="17"><rect x="0.5" y="0.5" width="15" height="16" fill="#2b2b2b" stroke="#2b2b2b"/><path d="M1 16 L15 1" stroke="#d8d8d8" stroke-width="1"/><path d="M15 1 V16" stroke="#d8d8d8" stroke-width="1"/></svg>
<div class="a t" id="t65" style="transform:scaleX(1.0484);left:1741px;top:642.09px;font-size:11.5px;color:#e0e0e0;">Joints</div>
<div class="a" style="left:1653px;top:661px;width:20px;height:13px;background:#2b2b2b;border:1px solid #1e1e1e;border-radius:3px;"></div>
<div class="a" style="left:1676px;top:661px;width:20px;height:13px;background:#2b2b2b;border:1px solid #1e1e1e;border-radius:3px;"></div>
<div class="a" style="left:1699px;top:661px;width:20px;height:13px;background:#2b2b2b;border:1px solid #1e1e1e;border-radius:3px;"></div>
<div class="a t" id="t66" style="left:1658.5px;top:661.59px;font-size:11.5px;color:#d8d8d8;">V</div>
<div class="a t" id="t67" style="left:1682px;top:661.59px;font-size:11.5px;color:#d8d8d8;">P</div>
<svg style="left:1722px;top:659px" width="16" height="17"><rect x="0.5" y="0.5" width="15" height="16" fill="#2b2b2b" stroke="#2b2b2b"/><path d="M1 16 L15 1" stroke="#d8d8d8" stroke-width="1"/><path d="M15 1 V16" stroke="#d8d8d8" stroke-width="1"/></svg>
<div class="a t" id="t68" style="transform:scaleX(1.0133);left:1741px;top:662.09px;font-size:11.5px;color:#e0e0e0;">Mesh</div>
<div class="a" style="left:1649px;top:879px;width:247px;height:12px;background:#333333;"></div>
<svg style="left:1652px;top:880px" width="8" height="10"><path d="M7 0 V10 L0 5 Z" fill="#b0b0b0"/></svg>
<svg style="left:1886px;top:880px" width="8" height="10"><path d="M0 0 V10 L7 5 Z" fill="#c8c8c8"/></svg>
<div class="a" style="left:1662px;top:880px;width:154px;height:10px;background:#5e5e5e;border-radius:5px;"></div>
<div class="a" style="left:1904px;top:153px;width:16px;height:745px;background:#3f3f3f;"></div>
<div class="a" style="left:1905px;top:155px;width:15px;height:164px;background:#393939;border:1px solid #333;"></div>
<div class="a t" style="left:1918px;top:168.5px;width:141.2px;font-size:11px;color:#dcdcdc;transform:rotate(90deg);transform-origin:0 0;line-height:12px;letter-spacing:0.37px;">Channel Box / Layer Editor</div>
<div class="a" style="left:1905px;top:322px;width:15px;height:113px;background:#393939;border:1px solid #333;"></div>
<div class="a t" style="left:1918px;top:333px;width:86px;font-size:11px;color:#a0a0a0;transform:rotate(90deg);transform-origin:0 0;line-height:12px;letter-spacing:0.49px;">Modeling Toolkit</div>
<div class="a" style="left:1905px;top:437px;width:15px;height:110px;background:#393939;border:1px solid #333;"></div>
<div class="a t" style="left:1918px;top:449.2px;width:80.30000000000001px;font-size:11px;color:#a0a0a0;transform:rotate(90deg);transform-origin:0 0;line-height:12px;letter-spacing:0.5px;">Attribute Editor</div>
<div class="a" style="left:1905px;top:549px;width:15px;height:72px;background:#393939;border:1px solid #333;"></div>
<div class="a t" style="left:1918px;top:559.7px;width:48.799999999999955px;font-size:11px;color:#a0a0a0;transform:rotate(90deg);transform-origin:0 0;line-height:12px;letter-spacing:0.2px;">UV Editor</div>
<div class="a" style="left:0px;top:898px;width:1920px;height:4px;background:#3c3c3c;"></div>
<div class="a" style="left:2px;top:905px;width:6px;height:27px;background-image:radial-gradient(circle at 1.5px 1.5px,#8a8a8a 0.75px,transparent 0.95px);background-size:3px 3px;"></div>
<div class="a" style="left:13px;top:905px;width:1612px;height:28px;background:#2b2b2b;"></div>
<div class="a" style="left:74px;top:918px;width:2px;height:15px;background:#8c8c8c;"></div>
<div class="a t" id="t69" style="left:76.2px;top:904.00px;font-size:10.5px;color:#9a9a9a;">5</div>
<div class="a" style="left:141px;top:918px;width:2px;height:15px;background:#8c8c8c;"></div>
<div class="a t" id="t70" style="left:142.7px;top:904.00px;font-size:10.5px;color:#9a9a9a;">10</div>
<div class="a" style="left:208px;top:918px;width:2px;height:15px;background:#8c8c8c;"></div>
<div class="a t" id="t71" style="left:209.2px;top:904.00px;font-size:10.5px;color:#9a9a9a;">15</div>
<div class="a" style="left:274px;top:918px;width:2px;height:15px;background:#8c8c8c;"></div>
<div class="a t" id="t72" style="left:275.7px;top:904.00px;font-size:10.5px;color:#9a9a9a;">20</div>
<div class="a" style="left:340px;top:918px;width:2px;height:15px;background:#8c8c8c;"></div>
<div class="a t" id="t73" style="left:342.2px;top:904.00px;font-size:10.5px;color:#9a9a9a;">25</div>
<div class="a" style="left:407px;top:918px;width:2px;height:15px;background:#8c8c8c;"></div>
<div class="a t" id="t74" style="left:408.7px;top:904.00px;font-size:10.5px;color:#9a9a9a;">30</div>
<div class="a" style="left:474px;top:918px;width:2px;height:15px;background:#8c8c8c;"></div>
<div class="a t" id="t75" style="left:475.2px;top:904.00px;font-size:10.5px;color:#9a9a9a;">35</div>
<div class="a" style="left:540px;top:918px;width:2px;height:15px;background:#8c8c8c;"></div>
<div class="a t" id="t76" style="left:541.7px;top:904.00px;font-size:10.5px;color:#9a9a9a;">40</div>
<div class="a" style="left:606px;top:918px;width:2px;height:15px;background:#8c8c8c;"></div>
<div class="a t" id="t77" style="left:608.2px;top:904.00px;font-size:10.5px;color:#9a9a9a;">45</div>
<div class="a" style="left:673px;top:918px;width:2px;height:15px;background:#8c8c8c;"></div>
<div class="a t" id="t78" style="left:674.7px;top:904.00px;font-size:10.5px;color:#9a9a9a;">50</div>
<div class="a" style="left:740px;top:918px;width:2px;height:15px;background:#8c8c8c;"></div>
<div class="a t" id="t79" style="left:741.2px;top:904.00px;font-size:10.5px;color:#9a9a9a;">55</div>
<div class="a" style="left:806px;top:918px;width:2px;height:15px;background:#8c8c8c;"></div>
<div class="a t" id="t80" style="left:807.7px;top:904.00px;font-size:10.5px;color:#9a9a9a;">60</div>
<div class="a" style="left:872px;top:918px;width:2px;height:15px;background:#8c8c8c;"></div>
<div class="a t" id="t81" style="left:874.2px;top:904.00px;font-size:10.5px;color:#9a9a9a;">65</div>
<div class="a" style="left:939px;top:918px;width:2px;height:15px;background:#8c8c8c;"></div>
<div class="a t" id="t82" style="left:940.7px;top:904.00px;font-size:10.5px;color:#9a9a9a;">70</div>
<div class="a" style="left:1006px;top:918px;width:2px;height:15px;background:#8c8c8c;"></div>
<div class="a t" id="t83" style="left:1007.2px;top:904.00px;font-size:10.5px;color:#9a9a9a;">75</div>
<div class="a" style="left:1072px;top:918px;width:2px;height:15px;background:#8c8c8c;"></div>
<div class="a t" id="t84" style="left:1073.7px;top:904.00px;font-size:10.5px;color:#9a9a9a;">80</div>
<div class="a" style="left:1138px;top:918px;width:2px;height:15px;background:#8c8c8c;"></div>
<div class="a t" id="t85" style="left:1140.2px;top:904.00px;font-size:10.5px;color:#9a9a9a;">85</div>
<div class="a" style="left:1205px;top:918px;width:2px;height:15px;background:#8c8c8c;"></div>
<div class="a t" id="t86" style="left:1206.7px;top:904.00px;font-size:10.5px;color:#9a9a9a;">90</div>
<div class="a" style="left:1272px;top:918px;width:2px;height:15px;background:#8c8c8c;"></div>
<div class="a t" id="t87" style="left:1273.2px;top:904.00px;font-size:10.5px;color:#9a9a9a;">95</div>
<div class="a" style="left:1338px;top:918px;width:2px;height:15px;background:#8c8c8c;"></div>
<div class="a t" id="t88" style="left:1339.7px;top:904.00px;font-size:10.5px;color:#9a9a9a;">100</div>
<div class="a" style="left:1404px;top:918px;width:2px;height:15px;background:#8c8c8c;"></div>
<div class="a t" id="t89" style="left:1406.2px;top:904.00px;font-size:10.5px;color:#9a9a9a;">105</div>
<div class="a" style="left:1471px;top:918px;width:2px;height:15px;background:#8c8c8c;"></div>
<div class="a t" id="t90" style="left:1472.7px;top:904.00px;font-size:10.5px;color:#9a9a9a;">110</div>
<div class="a" style="left:1538px;top:918px;width:2px;height:15px;background:#8c8c8c;"></div>
<div class="a t" id="t91" style="left:1539.2px;top:904.00px;font-size:10.5px;color:#9a9a9a;">115</div>
<div class="a" style="left:1604px;top:918px;width:2px;height:15px;background:#8c8c8c;"></div>
<div class="a" style="left:1605px;top:905px;width:11px;height:28px;background:#5a5a5a;"></div>
<div class="a" style="left:1603px;top:918px;width:2px;height:15px;background:#b4b4b4;"></div>
<div class="a t" id="t92" style="transform:scaleX(0.9697);left:1606.7px;top:904.20px;font-size:10.5px;color:#a8a8a8;">120</div>
<div class="a t" id="t93" style="transform:scaleX(0.9603);left:1606.7px;top:919.23px;font-size:10.8px;color:#ffffff;">120</div>
<div class="a" style="left:1632px;top:911px;width:87px;height:18px;background:#2b2b2b;border-radius:2px;"></div>
<div class="a t" id="t94" style="transform:scaleX(0.9381);left:1637.5px;top:914.59px;font-size:11.5px;color:#dcdcdc;">120</div>
<svg style="left:1730px;top:912px" width="17" height="14"><rect x="0" y="1" width="2" height="12" fill="#d0d0d0"/><path d="M9 1 V13 L2.5 7 Z M16 1 V13 L9.5 7 Z" fill="#d0d0d0"/></svg>
<svg style="left:1754px;top:912px" width="12" height="14"><rect x="0" y="1" width="2" height="12" fill="#d0d0d0"/><path d="M11 1 V13 L3 7 Z" fill="#d0d0d0"/></svg>
<svg style="left:1777px;top:912px" width="13" height="14"><rect x="0" y="0" width="2" height="14" fill="#f08a3a" stroke-dasharray="2 1"/><path d="M12 1 V13 L4 7 Z" fill="#d0d0d0"/></svg>
<svg style="left:1800px;top:912px" width="13" height="14"><path d="M12 0 V14 L1 7 Z" fill="#d0d0d0"/></svg>
<svg style="left:1823px;top:912px" width="13" height="14"><path d="M1 0 V14 L12 7 Z" fill="#d0d0d0"/></svg>
<svg style="left:1846px;top:912px" width="14" height="14"><path d="M1 1 V13 L9 7 Z" fill="#d0d0d0"/><rect x="11" y="0" width="2" height="14" fill="#f08a3a"/></svg>
<svg style="left:1869px;top:912px" width="13" height="14"><path d="M1 1 V13 L9 7 Z" fill="#d0d0d0"/><rect x="10" y="1" width="2" height="12" fill="#d0d0d0"/></svg>
<svg style="left:1891px;top:912px" width="17" height="14"><path d="M1 1 V13 L7.5 7 Z M8 1 V13 L14.5 7 Z" fill="#d0d0d0"/><rect x="15" y="1" width="2" height="12" fill="#d0d0d0"/></svg>
<div class="a" style="left:0px;top:935.5px;width:1920px;height:3px;background:#393939;"></div>
<div class="a" style="left:2px;top:941px;width:6px;height:27px;background-image:radial-gradient(circle at 1.5px 1.5px,#8a8a8a 0.75px,transparent 0.95px);background-size:3px 3px;"></div>
<div class="a" style="left:14px;top:943px;width:88px;height:25px;background:#2b2b2b;border-radius:2px;"></div>
<div class="a" style="left:110px;top:943px;width:88px;height:25px;background:#2b2b2b;border-radius:2px;"></div>
<div class="a t" id="t95" style="left:19.5px;top:949.59px;font-size:11.5px;color:#dcdcdc;">1</div>
<div class="a t" id="t96" style="left:115.5px;top:949.59px;font-size:11.5px;color:#dcdcdc;">1</div>
<div class="a" style="left:205px;top:943px;width:1021px;height:25px;background:#3a3a3a;"></div>
<div class="a" style="left:210px;top:945px;width:615px;height:21px;background:#5d5d5d;border-radius:3px;"></div>
<div class="a" style="left:215px;top:948px;width:15px;height:14px;background:#a0a0a0;border-radius:3px;"></div>
<div class="a t" id="t97" style="left:233.3px;top:950.04px;font-size:11px;color:#dcdcdc;">1</div>
<div class="a t" id="t98" style="transform:scaleX(0.9804);left:784px;top:950.04px;font-size:11px;color:#dcdcdc;">120</div>
<div class="a" style="left:807px;top:948px;width:15px;height:14px;background:#a0a0a0;border-radius:3px;"></div>
<div class="a" style="left:1233px;top:943px;width:87px;height:25px;background:#2b2b2b;border-radius:2px;"></div>
<div class="a t" id="t99" style="transform:scaleX(0.9381);left:1238.5px;top:949.59px;font-size:11.5px;color:#dcdcdc;">120</div>
<div class="a" style="left:1329px;top:943px;width:87px;height:25px;background:#2b2b2b;border-radius:2px;"></div>
<div class="a t" id="t100" style="transform:scaleX(0.9642);left:1334.5px;top:949.59px;font-size:11.5px;color:#dcdcdc;">200</div>
<div class="a" style="left:1422px;top:945px;width:1px;height:21px;background:#9a9a9a;"></div>
<div class="a" style="left:1421px;top:950px;width:3px;height:11px;background:#949494;"></div>
<svg style="left:1437px;top:951px" width="11" height="7"><path d="M0.5 0.5 H10.5 L5.5 6 Z" fill="none" stroke="#a0a0a0"/></svg>
<div class="a" style="left:1455px;top:943px;width:100px;height:25px;background:#404040;border:1px solid #4a4a4a;border-radius:2px;"></div>
<div class="a t" id="t101" style="transform:scaleX(0.9734);left:1460px;top:949.59px;font-size:11.5px;color:#d0d0d0;">No Character Set</div>
<svg style="left:1566px;top:951px" width="11" height="7"><path d="M0.5 0.5 H10.5 L5.5 6 Z" fill="none" stroke="#a0a0a0"/></svg>
<div class="a" style="left:1584px;top:943px;width:100px;height:25px;background:#404040;border:1px solid #4a4a4a;border-radius:2px;"></div>
<div class="a t" id="t102" style="transform:scaleX(0.9677);left:1589px;top:949.59px;font-size:11.5px;color:#d0d0d0;">No Anim Layer</div>
<div class="a" style="left:1695px;top:945px;width:1px;height:21px;background:#9a9a9a;"></div>
<div class="a" style="left:1694px;top:950px;width:3px;height:11px;background:#949494;"></div>
<div class="a" style="left:1709px;top:944px;width:74px;height:23px;background:#595959;"></div>
<div class="a" style="left:1784px;top:944px;width:19px;height:23px;background:#555555;"></div>
<div class="a t" id="t103" style="transform:scaleX(1.0534);left:1712px;top:949.59px;font-size:11.5px;color:#bdbdbd;">24 fps</div>
<svg style="left:1788px;top:953px" width="10" height="6"><path d="M0 0 H10 L5.0 6 Z" fill="#d0d0d0"/></svg>
<svg style="left:1816px;top:948px" width="19" height="14"><path d="M3 6 A4 4 0 0 1 7 2 H14 M16 8 A4 4 0 0 1 12 12 H5" fill="none" stroke="#d0d0d0" stroke-width="2"/><path d="M13 0 L17 2 L13 5 Z M6 9 L2 12 L6 14 Z" fill="#d0d0d0"/></svg>
<div class="a" style="left:1848px;top:945px;width:1px;height:21px;background:#9a9a9a;"></div>
<div class="a" style="left:1847px;top:950px;width:3px;height:11px;background:#949494;"></div>
<div class="a" style="left:1859px;top:944px;width:23px;height:23px;background:#e03030;"></div>
<svg style="left:1861px;top:946px" width="19" height="19"><circle cx="9.5" cy="9.5" r="7" fill="none" stroke="#f0d0d0" stroke-width="1.6"/><path d="M9.5 3 V16 M3 9.5 H16" stroke="#f0d0d0" stroke-width="1.6"/></svg>
<svg style="left:1890px;top:946px" width="19" height="19"><circle cx="4" cy="4" r="3" fill="none" stroke="#d0d0d0" stroke-width="1.4"/><circle cx="13" cy="5" r="2" fill="#f08a3a"/><path d="M12 7 L9 12 L5 12 M9 12 L12 15 L10 19 M10 9 L15 10" stroke="#f08a3a" stroke-width="2.2" fill="none"/></svg>
<div class="a" style="left:0px;top:972px;width:1920px;height:3px;background:#393939;"></div>
<div class="a" style="left:2px;top:976px;width:6px;height:26px;background-image:radial-gradient(circle at 1.5px 1.5px,#8a8a8a 0.75px,transparent 0.95px);background-size:3px 3px;"></div>
<div class="a t" id="t104" style="transform:scaleX(0.8666);left:24.5px;top:983.59px;font-size:11.5px;color:#e0e0e0;">MEL</div>
<div class="a" style="left:59px;top:978px;width:664px;height:24px;background:#2b2b2b;border-radius:2px;"></div>
<div class="a" style="left:726px;top:985px;width:3px;height:10px;background-image:radial-gradient(circle,#7a7a7a 0.6px,transparent 0.8px);background-size:3px 3px;"></div>
<div class="a" style="left:731px;top:978px;width:1156px;height:24px;background:#2b2b2b;border-radius:2px;"></div>
<svg style="left:1893px;top:981px" width="19" height="19"><rect x="0.5" y="0.5" width="18" height="18" fill="#3a3a3a" stroke="#b8b8b8"/><path d="M0.5 3.5 H18.5" stroke="#b8b8b8"/><text x="2.5" y="15" font-size="10" font-family="Liberation Mono" fill="#c8c8c8">{;}</text></svg>
<div class="a" style="left:0px;top:1003px;width:1920px;height:3px;background:#393939;"></div>
<div class="a" style="left:2px;top:1009px;width:6px;height:19px;background-image:radial-gradient(circle at 1.5px 1.5px,#8a8a8a 0.75px,transparent 0.95px);background-size:3px 3px;"></div>
<div class="a t" id="t105" style="transform:scaleX(0.9156);left:24px;top:1013.10px;font-size:10.5px;color:#c8c8c8;">Select Tool: select an object</div>
<div class="a" style="left:0px;top:1030px;width:1920px;height:50px;background:#080808;"></div>
<svg style="left:20px;top:1045px" width="21" height="21"><path d="M0 3 L8.5 1.8 V10 H0 Z M9.5 1.6 L20 0 V10 H9.5 Z M0 11 H8.5 V19.2 L0 18 Z M9.5 11 H20 V21 L9.5 19.4 Z" fill="#ffffff"/></svg>
<div class="a" style="left:60px;top:1030px;width:430px;height:50px;background:#f0f0f0;"></div>
<svg style="left:71px;top:1041px" width="28" height="28"><circle cx="14" cy="14" r="11.5" fill="none" stroke="#1a1a1a" stroke-width="2.6"/></svg>
<div class="a t" id="t106" style="transform:scaleX(0.9051);left:110px;top:1044.81px;font-size:19px;color:#333333;">Type here to search</div>
<svg style="left:456px;top:1045px" width="16" height="22"><rect x="4.5" y="1" width="7" height="12" rx="3.5" fill="none" stroke="#222" stroke-width="1.6"/><path d="M1.5 10 A6.5 6.5 0 0 0 14.5 10 M8 16.5 V20 M4 20.5 H12" fill="none" stroke="#222" stroke-width="1.5"/></svg>
<svg style="left:509px;top:1045px" width="22" height="22"><rect x="2" y="5" width="12" height="12" fill="none" stroke="#fff" stroke-width="1.6"/><path d="M1 2 H15 M1 20 H15 M19 2 V4 M19 7 V20" stroke="#fff" stroke-width="1.6"/></svg>
<svg style="left:568px;top:1042px" width="32" height="26"><path d="M0 10 L16 0 L32 10 V26 H0 Z" fill="#fff"/><path d="M0 10 L16 20 L32 10" fill="none" stroke="#0c0c0c" stroke-width="1.5"/><path d="M10 16 L32 10" stroke="#0c0c0c" stroke-width="1.2"/></svg>
<svg style="left:630px;top:1042px" width="32" height="26"><path d="M0 2 H10 L13 5 H30 V24 H0 Z" fill="#f2c94c"/><rect x="0" y="8" width="30" height="16" fill="#ffd966"/><rect x="10" y="14" width="10" height="4" fill="#3a8ee6"/><path d="M0 18 H10 V24 H0 Z M20 18 H30 V24 H20 Z" fill="#2e7dd1"/></svg>
<svg style="left:692px;top:1042px" width="32" height="28"><g fill="#fff"><path d="M8 0 L16 5 L8 10 L0 5 Z"/><path d="M24 0 L32 5 L24 10 L16 5 Z"/><path d="M0 15 L8 10 L16 15 L8 20 Z"/><path d="M16 15 L24 10 L32 15 L24 20 Z"/><path d="M8 22 L16 17 L24 22 L16 27 Z"/></g></svg>
<svg style="left:754px;top:1040px" width="30" height="30"><circle cx="15" cy="15" r="14" fill="#db4437"/><path d="M15 15 L27.1 8 A14 14 0 0 1 15 29 Z" fill="#ffcd40"/><path d="M15 15 L15 29 A14 14 0 0 1 2.9 8 Z" fill="#0f9d58"/><circle cx="15" cy="15" r="6.5" fill="#fff"/><circle cx="15" cy="15" r="5" fill="#4285f4"/></svg>
<div class="a" style="left:745px;top:1077px;width:51px;height:3px;background:#76b9ed;"></div>
<svg style="left:818px;top:1041px" width="28" height="27"><rect x="0.5" y="0.5" width="27" height="26" fill="#001d34" stroke="#31a8ff" stroke-width="1.5"/><text x="4" y="20" font-size="15" font-family="Liberation Sans" font-weight="bold" fill="#31a8ff">Ps</text></svg>
<svg style="left:880px;top:1041px" width="28" height="27"><rect x="0.5" y="0.5" width="27" height="26" fill="#261300" stroke="#ff7c00" stroke-width="1.5"/><text x="5" y="20" font-size="15" font-family="Liberation Sans" fill="#ff9a00">Ai</text></svg>
<div class="a" style="left:926px;top:1030px;width:61px;height:50px;background:#2c2c2c;"></div>
<div class="a" style="left:926px;top:1077px;width:61px;height:3px;background:#76b9ed;"></div>
<svg style="left:940px;top:1040px" width="31" height="30"><rect x="0" y="0" width="31" height="30" fill="#e8f4f4"/><path d="M4 24 L7 5 L12 5 L15.5 15 L19 5 L24 5 L27 24 L22 24 L20.5 13 L17 21 L14 21 L10.5 13 L9 24 Z" fill="#2aa2a8"/><text x="9" y="28.5" font-size="3.5" font-family="Liberation Sans" fill="#2aa2a8">MAYA</text></svg>
<div class="a" style="left:986px;top:1030px;width:2px;height:50px;background:#3a3a3a;"></div>
<svg style="left:1500px;top:1041px" width="30" height="30"><circle cx="14" cy="14" r="13" fill="#2a8ad8" stroke="#fff" stroke-width="1.5"/><text x="7.5" y="21" font-size="19" font-family="Liberation Sans" font-weight="bold" fill="#fff">?</text><circle cx="23" cy="23" r="5.5" fill="#f0a020"/><rect x="22.2" y="21" width="1.6" height="5" fill="#fff"/></svg>
<svg style="left:1556px;top:1044px" width="24" height="22"><circle cx="16" cy="6" r="4" fill="none" stroke="#fff" stroke-width="1.5"/><circle cx="7" cy="11" r="3.5" fill="none" stroke="#fff" stroke-width="1.5"/><path d="M1 21 Q2 15 7 15 Q12 15 13 21 M12 12 Q14 10 16 10 Q22 10 23 16" fill="none" stroke="#fff" stroke-width="1.5"/></svg>
<svg style="left:1603px;top:1048px" width="17" height="10"><path d="M1 9 L8.5 1.5 L16 9" fill="none" stroke="#fff" stroke-width="1.5"/></svg>
<svg style="left:1631px;top:1046px" width="22" height="16"><rect x="3" y="4" width="17" height="10" fill="none" stroke="#fff" stroke-width="1.4"/><rect x="20" y="7" width="2" height="4" fill="#fff"/><rect x="5" y="6" width="6" height="6" fill="#fff"/><path d="M4 0 V4 M7 0 V4" stroke="#fff"/></svg>
<svg style="left:1663px;top:1045px" width="20" height="18"><path d="M1 17 A16 16 0 0 1 17 1 M5 17 A12 12 0 0 1 17 5 M9 17 A8 8 0 0 1 17 9" fill="none" stroke="#fff" stroke-width="1.3"/><circle cx="16" cy="16" r="2" fill="#fff"/></svg>
<svg style="left:1691px;top:1045px" width="22" height="18"><path d="M1 6 H5 L10 1 V17 L5 12 H1 Z" fill="none" stroke="#fff" stroke-width="1.4"/><path d="M13 6 Q15 9 13 12 M16 4 Q19 9 16 14 M19 2 Q23 9 19 16" fill="none" stroke="#fff" stroke-width="1.2"/></svg>
<div class="a t" id="t107" style="transform:scaleX(0.8611);left:1725px;top:1047.42px;font-size:15px;color:#ffffff;">ENG</div>
<div class="a t" id="t108" style="transform:scaleX(0.9665);left:1778px;top:1035.88px;font-size:14.5px;color:#ffffff;">03:30 PM</div>
<div class="a t" id="t109" style="transform:scaleX(1.0246);left:1770px;top:1058.88px;font-size:14.5px;color:#ffffff;">05-12-2019</div>
<svg style="left:1868px;top:1044px" width="32" height="30"><path d="M0 0 H20 V15 H8 L4 19 V15 H0 Z" fill="#fff"/><path d="M4 4 H16 M4 8 H16 M4 11 H12" stroke="#0c0c0c" stroke-width="1"/><circle cx="19" cy="17" r="10" fill="#1f1f1f" stroke="#9a9a9a" stroke-width="1.3"/><text x="14" y="23" font-size="15" font-family="Liberation Sans" font-weight="bold" fill="#fff">2</text></svg>
<div class="a" style="left:1913px;top:1030px;width:1px;height:50px;background:#555;"></div>
</body></html>
